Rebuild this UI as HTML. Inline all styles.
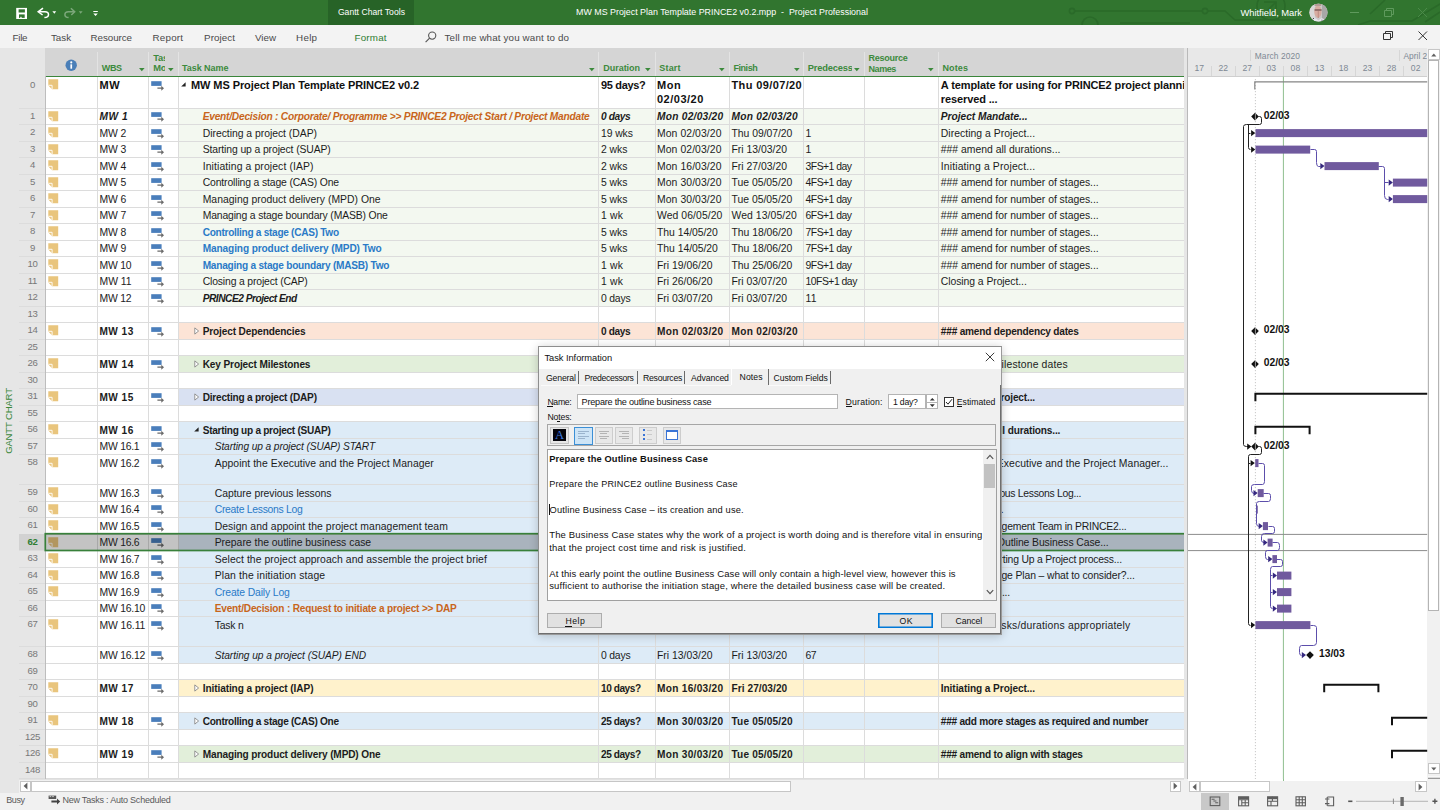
<!DOCTYPE html>
<html lang="en"><head><meta charset="utf-8"><title>MW MS Project Plan Template PRINCE2 v0.2.mpp - Project Professional</title>
<style>
html,body{margin:0;padding:0;}
body{width:1440px;height:810px;overflow:hidden;position:relative;background:#fff;font-family:"Liberation Sans", sans-serif;}
div,span.t,svg{position:absolute;}
span.t{white-space:nowrap;line-height:16px;height:16px;}
</style></head>
<body>
<div style="left:0px;top:0px;width:1440px;height:25.4px;background:#31752f;"></div>
<svg style="left:1040px;top:0" width="400" height="25" viewBox="0 0 400 25">
<g fill="none" stroke="#2a6a29" stroke-width="1.6">
<path d="M32 11 H163 M167 11 H185 L195 20 H260"/>
<circle cx="32" cy="11" r="2.6" fill="#31752f"/><circle cx="165" cy="11" r="2.6" fill="#31752f"/>
<circle cx="231" cy="6" r="14"/><path d="M224 2 H236 V12 M236 2 L226 12"/>
<path d="M42 25 A8 8 0 0 1 58 25 M80 23 H150"/>
<path d="M400 4 L372 21 H330 L318 25 M400 12 L385 22 M345 0 L330 14"/>
</g></svg>
<div style="left:0px;top:25px;width:1440px;height:1px;background:#8fb28e;"></div>
<div style="left:328px;top:0px;width:86px;height:25px;background:#276327;"></div>
<div style="left:328px;top:25px;width:86px;height:1px;background:#88a987;"></div>
<span class="t" style="left:337.9px;top:4px;font-size:8.6px;color:#fff;letter-spacing:0.02px;">Gantt Chart Tools</span>
<span class="t" style="left:576px;top:4px;font-size:8.9px;color:#fff;letter-spacing:0.001px;white-space:pre;">MW MS Project Plan Template PRINCE2 v0.2.mpp  -  Project Professional</span>
<span class="t" style="left:1240.5px;top:4.5px;font-size:9.4px;color:#fff;letter-spacing:-0.033px;">Whitfield, Mark</span>
<svg style="left:1309px;top:3.4px" width="19" height="19" viewBox="0 0 19 19">
<defs><clipPath id="av"><circle cx="9.5" cy="9.5" r="9.1"/></clipPath></defs>
<g clip-path="url(#av)"><rect width="19" height="19" fill="#cbc9c9"/>
<rect x="0" y="0" width="6" height="19" fill="#d9d8d8"/><rect x="13" y="0" width="6" height="19" fill="#a8a7a7"/>
<ellipse cx="8.9" cy="8.6" rx="3.7" ry="6.2" fill="#d7aca1"/><rect x="5.6" y="1" width="6.6" height="2" fill="#b39a96"/>
<rect x="5.6" y="6.4" width="7" height="1.2" fill="#6e4b49"/><path d="M9.3 8 V15" stroke="#c08f86" stroke-width="1.2"/>
<path d="M2 19 Q4 14.6 7 15.4 L9.4 17.6 L11.8 15.4 Q15 14.6 17 19Z" fill="#e6e4ec"/><path d="M3.4 16.6 L4.8 15.2 M12.6 17.2 L13.6 17.4" stroke="#2a2a30" stroke-width="1"/></g></svg>
<svg style="left:0;top:0" width="110" height="25" viewBox="0 0 110 25">
<rect x="16.2" y="7.9" width="10.8" height="11.1" fill="#fff"/>
<rect x="18.6" y="9.3" width="6.3" height="3.2" fill="#31752f"/><rect x="19" y="14.4" width="5.7" height="4.6" fill="#31752f"/>
<rect x="20.3" y="16.8" width="1.3" height="2.2" fill="#fff"/><rect x="18.2" y="17.9" width="6.9" height="1.1" fill="#fff"/>
<g fill="none" stroke="#fff" stroke-width="1.5" stroke-linejoin="miter">
<path d="M43 8.2 L38.2 11.8 L42.6 15"/><path d="M39 11.8 H45 Q48.5 11.8 48.5 14.7 Q48.5 17.4 44.4 17.5"/></g>
<path d="M52.4 11.2 H56.2 L54.3 13.8 Z" fill="#fff"/>
<g opacity="0.36"><g fill="none" stroke="#fff" stroke-width="1.5"><path d="M70.9 8.2 L74.7 11.8 L71.3 15"/><path d="M74 11.8 H68.4 Q64.9 11.8 64.9 14.7 Q64.9 17.4 68.6 17.5"/></g>
<path d="M78.8 11.2 H82.6 L80.7 13.8 Z" fill="#fff"/></g>
<path d="M93.3 10.9 H97.8 V11.9 H93.3 Z M93.3 13.5 H97.8 L95.55 15.9 Z" fill="#fff"/>
</svg>
<svg style="left:1340px;top:0" width="100" height="24" viewBox="0 0 100 24">
<g fill="none" stroke="#5f9a5d" stroke-width="1"><path d="M10 12.5 H19"/>
<path d="M44.5 10.5 H51.5 V16.5 H44.5 Z M46.5 10.5 V8.5 H53.5 V14.5 H51.5"/>
<path d="M78 8 L87 17 M87 8 L78 17" stroke="#4b8a49"/></g></svg>
<div style="left:0px;top:25.4px;width:1440px;height:22.6px;background:#f3f3f3;"></div>
<span class="t" style="left:12.5px;top:29.5px;font-size:9.8px;color:#4a4a4a;letter-spacing:-0.24px;">File</span>
<span class="t" style="left:51px;top:29.5px;font-size:9.8px;color:#4a4a4a;letter-spacing:-0.026px;">Task</span>
<span class="t" style="left:90.5px;top:29.5px;font-size:9.8px;color:#4a4a4a;letter-spacing:-0.051px;">Resource</span>
<span class="t" style="left:152.5px;top:29.5px;font-size:9.8px;color:#4a4a4a;letter-spacing:0.234px;">Report</span>
<span class="t" style="left:204px;top:29.5px;font-size:9.8px;color:#4a4a4a;letter-spacing:0.096px;">Project</span>
<span class="t" style="left:255px;top:29.5px;font-size:9.8px;color:#4a4a4a;letter-spacing:0.005px;">View</span>
<span class="t" style="left:296px;top:29.5px;font-size:9.8px;color:#4a4a4a;letter-spacing:0.307px;">Help</span>
<span class="t" style="left:354.5px;top:29.5px;font-size:9.8px;color:#2f7d32;letter-spacing:0.209px;">Format</span>
<span class="t" style="left:444.5px;top:29.5px;font-size:9.8px;color:#4a4a4a;letter-spacing:0.141px;">Tell me what you want to do</span>
<svg style="left:422.8px;top:29.3px" width="16" height="16" viewBox="0 0 16 16">
<circle cx="9.2" cy="6.6" r="3.6" fill="none" stroke="#555" stroke-width="1.1"/><path d="M6.6 9.2 L2.6 13.2" stroke="#555" stroke-width="1.2"/></svg>
<svg style="left:1380px;top:28px" width="56" height="16" viewBox="0 0 56 16">
<g fill="none" stroke="#333" stroke-width="1"><path d="M3.5 5.5 H10.5 V11.5 H3.5 Z M5.5 5.5 V3.5 H12.5 V9.5 H10.5"/>
<path d="M38.5 3.5 L47 12 M47 3.5 L38.5 12"/></g></svg>
<div style="left:0px;top:48px;width:45px;height:745px;background:#e6e6e6;"></div>
<span class="t" style="left:-30.7px;top:412.8px;width:80px;text-align:center;font-size:9.6px;color:#3a873a;transform:rotate(-90deg);letter-spacing:-0.2px;">GANTT CHART</span>
<div style="left:45px;top:48px;width:1139px;height:28px;background:#d5d5d5;"></div>
<div style="left:96.5px;top:52px;width:1px;height:24px;background:#e3e3e3;"></div>
<div style="left:147.5px;top:52px;width:1px;height:24px;background:#e3e3e3;"></div>
<div style="left:177.5px;top:52px;width:1px;height:24px;background:#e3e3e3;"></div>
<div style="left:597.5px;top:52px;width:1px;height:24px;background:#e3e3e3;"></div>
<div style="left:654.5px;top:52px;width:1px;height:24px;background:#e3e3e3;"></div>
<div style="left:728.5px;top:52px;width:1px;height:24px;background:#e3e3e3;"></div>
<div style="left:802.5px;top:52px;width:1px;height:24px;background:#e3e3e3;"></div>
<div style="left:863.5px;top:52px;width:1px;height:24px;background:#e3e3e3;"></div>
<div style="left:937.5px;top:52px;width:1px;height:24px;background:#e3e3e3;"></div>
<div style="left:45px;top:75.5px;width:1139px;height:1.7px;background:#3a853a;"></div>
<svg style="left:65px;top:59px" width="13" height="13" viewBox="0 0 13 13"><circle cx="6.2" cy="6.2" r="5.7" fill="#4a7fb8"/>
<rect x="5.4" y="5.3" width="1.7" height="4.4" fill="#fff"/><circle cx="6.25" cy="3.4" r="1.05" fill="#fff"/></svg>
<span class="t" style="left:101.7px;top:60px;font-size:9px;color:#3c8a3c;font-weight:bold;letter-spacing:-0.305px;">WBS</span>
<svg style="left:138.9px;top:68.3px" width="6" height="4" viewBox="0 0 6 4"><path d="M0 0 H5.6 L2.8 3.2 Z" fill="#3c8a3c"/></svg>
<div style="left:152px;top:50px;width:13.4px;height:26px;overflow:hidden;"><span class="t" style="left:1.3px;top:-0.1px;font-size:9.3px;font-weight:bold;color:#3c8a3c;letter-spacing:-0.2px;">Task</span><span class="t" style="left:1.3px;top:10.4px;font-size:9.3px;font-weight:bold;color:#3c8a3c;letter-spacing:-0.2px;">Mode</span></div>
<svg style="left:168px;top:68.3px" width="6" height="4" viewBox="0 0 6 4"><path d="M0 0 H5.6 L2.8 3.2 Z" fill="#3c8a3c"/></svg>
<span class="t" style="left:182px;top:60px;font-size:9px;color:#3c8a3c;font-weight:bold;letter-spacing:-0.046px;">Task Name</span>
<svg style="left:588.8px;top:68.3px" width="6" height="4" viewBox="0 0 6 4"><path d="M0 0 H5.6 L2.8 3.2 Z" fill="#3c8a3c"/></svg>
<span class="t" style="left:603.3px;top:60px;font-size:9px;color:#3c8a3c;font-weight:bold;letter-spacing:-0.044px;">Duration</span>
<svg style="left:645px;top:68.3px" width="6" height="4" viewBox="0 0 6 4"><path d="M0 0 H5.6 L2.8 3.2 Z" fill="#3c8a3c"/></svg>
<span class="t" style="left:659.2px;top:60px;font-size:9px;color:#3c8a3c;font-weight:bold;letter-spacing:0.219px;">Start</span>
<svg style="left:719.2px;top:68.3px" width="6" height="4" viewBox="0 0 6 4"><path d="M0 0 H5.6 L2.8 3.2 Z" fill="#3c8a3c"/></svg>
<span class="t" style="left:733.5px;top:60px;font-size:9px;color:#3c8a3c;font-weight:bold;letter-spacing:-0.462px;">Finish</span>
<svg style="left:793.6px;top:68.3px" width="6" height="4" viewBox="0 0 6 4"><path d="M0 0 H5.6 L2.8 3.2 Z" fill="#3c8a3c"/></svg>
<div style="left:806px;top:58px;width:45.6px;height:18px;overflow:hidden;"><span class="t" style="left:1.7px;top:1.7px;font-size:9.3px;font-weight:bold;color:#3c8a3c;letter-spacing:-0.15px;">Predecessors</span></div>
<svg style="left:854.4px;top:68.3px" width="6" height="4" viewBox="0 0 6 4"><path d="M0 0 H5.6 L2.8 3.2 Z" fill="#3c8a3c"/></svg>
<span class="t" style="left:868.4px;top:50px;font-size:9px;color:#3c8a3c;font-weight:bold;letter-spacing:-0.22px;">Resource</span>
<span class="t" style="left:868.4px;top:61px;font-size:9px;color:#3c8a3c;font-weight:bold;letter-spacing:-0.385px;">Names</span>
<svg style="left:928px;top:68.3px" width="6" height="4" viewBox="0 0 6 4"><path d="M0 0 H5.6 L2.8 3.2 Z" fill="#3c8a3c"/></svg>
<span class="t" style="left:942.5px;top:60px;font-size:9px;color:#3c8a3c;font-weight:bold;letter-spacing:0.119px;">Notes</span>
<div style="left:178px;top:108.3px;width:1006px;height:16.5px;background:#f3f8f0;"></div>
<div style="left:178px;top:124.8px;width:1006px;height:16.5px;background:#f3f8f0;"></div>
<div style="left:178px;top:141.3px;width:1006px;height:16.5px;background:#f3f8f0;"></div>
<div style="left:178px;top:157.8px;width:1006px;height:16.5px;background:#f3f8f0;"></div>
<div style="left:178px;top:174.3px;width:1006px;height:16.5px;background:#f3f8f0;"></div>
<div style="left:178px;top:190.8px;width:1006px;height:16.5px;background:#f3f8f0;"></div>
<div style="left:178px;top:207.3px;width:1006px;height:16.5px;background:#f3f8f0;"></div>
<div style="left:178px;top:223.8px;width:1006px;height:16.5px;background:#f3f8f0;"></div>
<div style="left:178px;top:240.3px;width:1006px;height:16.5px;background:#f3f8f0;"></div>
<div style="left:178px;top:256.8px;width:1006px;height:16.5px;background:#f3f8f0;"></div>
<div style="left:178px;top:273.3px;width:1006px;height:16.5px;background:#f3f8f0;"></div>
<div style="left:178px;top:289.8px;width:1006px;height:16.5px;background:#f3f8f0;"></div>
<div style="left:178px;top:322.8px;width:1006px;height:16.5px;background:#fce4d6;"></div>
<div style="left:178px;top:355.8px;width:1006px;height:16.5px;background:#e2efda;"></div>
<div style="left:178px;top:388.8px;width:1006px;height:16.5px;background:#d9e1f2;"></div>
<div style="left:178px;top:421.8px;width:1006px;height:16.5px;background:#ddebf7;"></div>
<div style="left:178px;top:438.3px;width:1006px;height:16.5px;background:#ddebf7;"></div>
<div style="left:178px;top:454.8px;width:1006px;height:30px;background:#ddebf7;"></div>
<div style="left:178px;top:484.8px;width:1006px;height:16.5px;background:#ddebf7;"></div>
<div style="left:178px;top:501.3px;width:1006px;height:16.5px;background:#ddebf7;"></div>
<div style="left:178px;top:517.8px;width:1006px;height:16.5px;background:#ddebf7;"></div>
<div style="left:178px;top:534.3px;width:1006px;height:16.5px;background:#ddebf7;"></div>
<div style="left:178px;top:550.8px;width:1006px;height:16.5px;background:#ddebf7;"></div>
<div style="left:178px;top:567.3px;width:1006px;height:16.5px;background:#ddebf7;"></div>
<div style="left:178px;top:583.8px;width:1006px;height:16.5px;background:#ddebf7;"></div>
<div style="left:178px;top:600.3px;width:1006px;height:16.5px;background:#ddebf7;"></div>
<div style="left:178px;top:616.8px;width:1006px;height:30px;background:#ddebf7;"></div>
<div style="left:178px;top:646.8px;width:1006px;height:16.5px;background:#ddebf7;"></div>
<div style="left:178px;top:679.8px;width:1006px;height:16.5px;background:#fff2cc;"></div>
<div style="left:178px;top:712.8px;width:1006px;height:16.5px;background:#ddebf7;"></div>
<div style="left:178px;top:745.8px;width:1006px;height:16.5px;background:#e2efda;"></div>
<div style="left:19px;top:107.6px;width:1165px;height:1px;background:#dcdcdc;"></div>
<div style="left:19px;top:124.1px;width:1165px;height:1px;background:#dcdcdc;"></div>
<div style="left:19px;top:140.6px;width:1165px;height:1px;background:#dcdcdc;"></div>
<div style="left:19px;top:157.1px;width:1165px;height:1px;background:#dcdcdc;"></div>
<div style="left:19px;top:173.6px;width:1165px;height:1px;background:#dcdcdc;"></div>
<div style="left:19px;top:190.1px;width:1165px;height:1px;background:#dcdcdc;"></div>
<div style="left:19px;top:206.6px;width:1165px;height:1px;background:#dcdcdc;"></div>
<div style="left:19px;top:223.1px;width:1165px;height:1px;background:#dcdcdc;"></div>
<div style="left:19px;top:239.6px;width:1165px;height:1px;background:#dcdcdc;"></div>
<div style="left:19px;top:256.1px;width:1165px;height:1px;background:#dcdcdc;"></div>
<div style="left:19px;top:272.6px;width:1165px;height:1px;background:#dcdcdc;"></div>
<div style="left:19px;top:289.1px;width:1165px;height:1px;background:#dcdcdc;"></div>
<div style="left:19px;top:305.6px;width:1165px;height:1px;background:#dcdcdc;"></div>
<div style="left:19px;top:322.1px;width:1165px;height:1px;background:#dcdcdc;"></div>
<div style="left:19px;top:338.6px;width:1165px;height:1px;background:#dcdcdc;"></div>
<div style="left:19px;top:355.1px;width:1165px;height:1px;background:#dcdcdc;"></div>
<div style="left:19px;top:371.6px;width:1165px;height:1px;background:#dcdcdc;"></div>
<div style="left:19px;top:388.1px;width:1165px;height:1px;background:#dcdcdc;"></div>
<div style="left:19px;top:404.6px;width:1165px;height:1px;background:#dcdcdc;"></div>
<div style="left:19px;top:421.1px;width:1165px;height:1px;background:#dcdcdc;"></div>
<div style="left:19px;top:437.6px;width:1165px;height:1px;background:#dcdcdc;"></div>
<div style="left:19px;top:454.1px;width:1165px;height:1px;background:#dcdcdc;"></div>
<div style="left:19px;top:484.1px;width:1165px;height:1px;background:#dcdcdc;"></div>
<div style="left:19px;top:500.6px;width:1165px;height:1px;background:#dcdcdc;"></div>
<div style="left:19px;top:517.1px;width:1165px;height:1px;background:#dcdcdc;"></div>
<div style="left:19px;top:533.6px;width:1165px;height:1px;background:#dcdcdc;"></div>
<div style="left:19px;top:550.1px;width:1165px;height:1px;background:#dcdcdc;"></div>
<div style="left:19px;top:566.6px;width:1165px;height:1px;background:#dcdcdc;"></div>
<div style="left:19px;top:583.1px;width:1165px;height:1px;background:#dcdcdc;"></div>
<div style="left:19px;top:599.6px;width:1165px;height:1px;background:#dcdcdc;"></div>
<div style="left:19px;top:616.1px;width:1165px;height:1px;background:#dcdcdc;"></div>
<div style="left:19px;top:646.1px;width:1165px;height:1px;background:#dcdcdc;"></div>
<div style="left:19px;top:662.6px;width:1165px;height:1px;background:#dcdcdc;"></div>
<div style="left:19px;top:679.1px;width:1165px;height:1px;background:#dcdcdc;"></div>
<div style="left:19px;top:695.6px;width:1165px;height:1px;background:#dcdcdc;"></div>
<div style="left:19px;top:712.1px;width:1165px;height:1px;background:#dcdcdc;"></div>
<div style="left:19px;top:728.6px;width:1165px;height:1px;background:#dcdcdc;"></div>
<div style="left:19px;top:745.1px;width:1165px;height:1px;background:#dcdcdc;"></div>
<div style="left:19px;top:761.6px;width:1165px;height:1px;background:#dcdcdc;"></div>
<div style="left:19px;top:778.1px;width:1165px;height:1px;background:#dcdcdc;"></div>
<div style="left:96.5px;top:77px;width:1px;height:702px;background:#dcdcdc;"></div>
<div style="left:147.5px;top:77px;width:1px;height:702px;background:#dcdcdc;"></div>
<div style="left:177.5px;top:77px;width:1px;height:702px;background:#dcdcdc;"></div>
<div style="left:597.5px;top:77px;width:1px;height:702px;background:#dcdcdc;"></div>
<div style="left:654.5px;top:77px;width:1px;height:702px;background:#dcdcdc;"></div>
<div style="left:728.5px;top:77px;width:1px;height:702px;background:#dcdcdc;"></div>
<div style="left:802.5px;top:77px;width:1px;height:702px;background:#dcdcdc;"></div>
<div style="left:863.5px;top:77px;width:1px;height:702px;background:#dcdcdc;"></div>
<div style="left:937.5px;top:77px;width:1px;height:702px;background:#dcdcdc;"></div>
<div style="left:44.5px;top:76px;width:1px;height:703px;background:#bdbdbd;"></div>
<div style="left:19px;top:533.9px;width:26px;height:16.5px;background:#d2d2d2;"></div>
<span class="t" style="left:-7.6px;width:80px;text-align:center;top:76.5px;font-size:9.6px;color:#787878;letter-spacing:-0.35px;">0</span>
<span class="t" style="left:-7.6px;width:80px;text-align:center;top:107.5px;font-size:9.6px;color:#787878;letter-spacing:-0.35px;">1</span>
<span class="t" style="left:-7.6px;width:80px;text-align:center;top:123.5px;font-size:9.6px;color:#787878;letter-spacing:-0.35px;">2</span>
<span class="t" style="left:-7.6px;width:80px;text-align:center;top:140.5px;font-size:9.6px;color:#787878;letter-spacing:-0.35px;">3</span>
<span class="t" style="left:-7.6px;width:80px;text-align:center;top:156.5px;font-size:9.6px;color:#787878;letter-spacing:-0.35px;">4</span>
<span class="t" style="left:-7.6px;width:80px;text-align:center;top:173.5px;font-size:9.6px;color:#787878;letter-spacing:-0.35px;">5</span>
<span class="t" style="left:-7.6px;width:80px;text-align:center;top:189.5px;font-size:9.6px;color:#787878;letter-spacing:-0.35px;">6</span>
<span class="t" style="left:-7.6px;width:80px;text-align:center;top:206.5px;font-size:9.6px;color:#787878;letter-spacing:-0.35px;">7</span>
<span class="t" style="left:-7.6px;width:80px;text-align:center;top:222.5px;font-size:9.6px;color:#787878;letter-spacing:-0.35px;">8</span>
<span class="t" style="left:-7.6px;width:80px;text-align:center;top:239.5px;font-size:9.6px;color:#787878;letter-spacing:-0.35px;">9</span>
<span class="t" style="left:-7.6px;width:80px;text-align:center;top:255.5px;font-size:9.6px;color:#787878;letter-spacing:-0.35px;">10</span>
<span class="t" style="left:-7.6px;width:80px;text-align:center;top:272.5px;font-size:9.6px;color:#787878;letter-spacing:-0.35px;">11</span>
<span class="t" style="left:-7.6px;width:80px;text-align:center;top:288.5px;font-size:9.6px;color:#787878;letter-spacing:-0.35px;">12</span>
<span class="t" style="left:-7.6px;width:80px;text-align:center;top:305.5px;font-size:9.6px;color:#787878;letter-spacing:-0.35px;">13</span>
<span class="t" style="left:-7.6px;width:80px;text-align:center;top:321.5px;font-size:9.6px;color:#787878;letter-spacing:-0.35px;">14</span>
<span class="t" style="left:-7.6px;width:80px;text-align:center;top:338.5px;font-size:9.6px;color:#787878;letter-spacing:-0.35px;">25</span>
<span class="t" style="left:-7.6px;width:80px;text-align:center;top:354.5px;font-size:9.6px;color:#787878;letter-spacing:-0.35px;">26</span>
<span class="t" style="left:-7.6px;width:80px;text-align:center;top:371.5px;font-size:9.6px;color:#787878;letter-spacing:-0.35px;">30</span>
<span class="t" style="left:-7.6px;width:80px;text-align:center;top:387.5px;font-size:9.6px;color:#787878;letter-spacing:-0.35px;">31</span>
<span class="t" style="left:-7.6px;width:80px;text-align:center;top:404.5px;font-size:9.6px;color:#787878;letter-spacing:-0.35px;">55</span>
<span class="t" style="left:-7.6px;width:80px;text-align:center;top:420.5px;font-size:9.6px;color:#787878;letter-spacing:-0.35px;">56</span>
<span class="t" style="left:-7.6px;width:80px;text-align:center;top:437.5px;font-size:9.6px;color:#787878;letter-spacing:-0.35px;">57</span>
<span class="t" style="left:-7.6px;width:80px;text-align:center;top:453.5px;font-size:9.6px;color:#787878;letter-spacing:-0.35px;">58</span>
<span class="t" style="left:-7.6px;width:80px;text-align:center;top:483.5px;font-size:9.6px;color:#787878;letter-spacing:-0.35px;">59</span>
<span class="t" style="left:-7.6px;width:80px;text-align:center;top:500.5px;font-size:9.6px;color:#787878;letter-spacing:-0.35px;">60</span>
<span class="t" style="left:-7.6px;width:80px;text-align:center;top:516.5px;font-size:9.6px;color:#787878;letter-spacing:-0.35px;">61</span>
<span class="t" style="left:-7.6px;width:80px;text-align:center;top:533.5px;font-size:9.6px;color:#2f7d32;font-weight:bold;letter-spacing:-0.35px;">62</span>
<span class="t" style="left:-7.6px;width:80px;text-align:center;top:549.5px;font-size:9.6px;color:#787878;letter-spacing:-0.35px;">63</span>
<span class="t" style="left:-7.6px;width:80px;text-align:center;top:566.5px;font-size:9.6px;color:#787878;letter-spacing:-0.35px;">64</span>
<span class="t" style="left:-7.6px;width:80px;text-align:center;top:582.5px;font-size:9.6px;color:#787878;letter-spacing:-0.35px;">65</span>
<span class="t" style="left:-7.6px;width:80px;text-align:center;top:599.5px;font-size:9.6px;color:#787878;letter-spacing:-0.35px;">66</span>
<span class="t" style="left:-7.6px;width:80px;text-align:center;top:615.5px;font-size:9.6px;color:#787878;letter-spacing:-0.35px;">67</span>
<span class="t" style="left:-7.6px;width:80px;text-align:center;top:645.5px;font-size:9.6px;color:#787878;letter-spacing:-0.35px;">68</span>
<span class="t" style="left:-7.6px;width:80px;text-align:center;top:662.5px;font-size:9.6px;color:#787878;letter-spacing:-0.35px;">69</span>
<span class="t" style="left:-7.6px;width:80px;text-align:center;top:678.5px;font-size:9.6px;color:#787878;letter-spacing:-0.35px;">70</span>
<span class="t" style="left:-7.6px;width:80px;text-align:center;top:695.5px;font-size:9.6px;color:#787878;letter-spacing:-0.35px;">90</span>
<span class="t" style="left:-7.6px;width:80px;text-align:center;top:711.5px;font-size:9.6px;color:#787878;letter-spacing:-0.35px;">91</span>
<span class="t" style="left:-7.6px;width:80px;text-align:center;top:728.5px;font-size:9.6px;color:#787878;letter-spacing:-0.35px;">125</span>
<span class="t" style="left:-7.6px;width:80px;text-align:center;top:744.5px;font-size:9.6px;color:#787878;letter-spacing:-0.35px;">126</span>
<span class="t" style="left:-7.6px;width:80px;text-align:center;top:761.5px;font-size:9.6px;color:#787878;letter-spacing:-0.35px;">148</span>
<svg style="left:48px;top:79.3px" width="11" height="11" viewBox="0 0 11 11"><path d="M0.3 0.2 H10.2 V10.2 H4 L0.3 6.6 Z" fill="#e9c57d"/><path d="M0.3 6.3 H4.1 V10.2" fill="none" stroke="#fff" stroke-width="0.9"/></svg>
<svg style="left:151.4px;top:81px" width="14" height="11" viewBox="0 0 14 11"><rect x="0.2" y="0.2" width="10.4" height="4.7" fill="#4a7ebb"/><path d="M6.4 6.6 H10.3 V4.7 L13 7.2 L10.3 9.7 V7.8 H6.4 Z" fill="#6a6a6a"/></svg>
<span class="t" style="left:99.5px;top:77px;font-size:11px;color:#111;font-weight:bold;letter-spacing:0.5px;">MW</span>
<svg style="left:181.4px;top:82.2px" width="6" height="6" viewBox="0 0 6 6"><path d="M4.6 0.2 V4.6 H0.2 Z" fill="#222"/></svg>
<span class="t" style="left:191px;top:77px;font-size:11px;color:#111;font-weight:bold;letter-spacing:-0.084px;">MW MS Project Plan Template PRINCE2 v0.2</span>
<span class="t" style="left:601px;top:77px;font-size:11px;color:#111;font-weight:bold;letter-spacing:-0.341px;">95 days?</span>
<span class="t" style="left:657px;top:77px;font-size:11px;color:#111;font-weight:bold;letter-spacing:0.5px;">Mon</span>
<span class="t" style="left:657px;top:91px;font-size:11px;color:#111;font-weight:bold;letter-spacing:0.5px;">02/03/20</span>
<span class="t" style="left:731.5px;top:77px;font-size:11px;color:#111;font-weight:bold;letter-spacing:0.378px;">Thu 09/07/20</span>
<div style="left:938.5px;top:77px;width:245px;height:31px;overflow:hidden;">
<span class="t" style="left:2.3px;top:0px;font-size:11px;color:#111;font-weight:bold;letter-spacing:-0.112px;">A template for using for PRINCE2 project planning and control. All rights</span>
<span class="t" style="left:2.3px;top:14px;font-size:11px;color:#111;font-weight:bold;letter-spacing:-0.117px;">reserved ...</span>
</div>
<svg style="left:48px;top:110.6px" width="11" height="11" viewBox="0 0 11 11"><path d="M0.3 0.2 H10.2 V10.2 H4 L0.3 6.6 Z" fill="#e9c57d"/><path d="M0.3 6.3 H4.1 V10.2" fill="none" stroke="#fff" stroke-width="0.9"/></svg>
<svg style="left:151.4px;top:112.3px" width="14" height="11" viewBox="0 0 14 11"><rect x="0.2" y="0.2" width="10.4" height="4.7" fill="#4a7ebb"/><path d="M6.4 6.6 H10.3 V4.7 L13 7.2 L10.3 9.7 V7.8 H6.4 Z" fill="#6a6a6a"/></svg>
<span class="t" style="left:99.5px;top:108.5px;font-size:10.2px;color:#1c1c1c;font-weight:bold;font-style:italic;letter-spacing:0.5px;">MW 1</span>
<span class="t" style="left:202.7px;top:108.5px;font-size:10.2px;color:#c8651b;font-weight:bold;font-style:italic;letter-spacing:-0.231px;">Event/Decision : Corporate/ Programme &gt;&gt; PRINCE2 Project Start / Project Mandate</span>
<span class="t" style="left:601px;top:108.5px;font-size:10.2px;color:#1c1c1c;font-weight:bold;font-style:italic;letter-spacing:-0.419px;">0 days</span>
<span class="t" style="left:657px;top:108.5px;font-size:10.2px;color:#1c1c1c;font-weight:bold;font-style:italic;letter-spacing:0.245px;">Mon 02/03/20</span>
<span class="t" style="left:731.5px;top:108.5px;font-size:10.2px;color:#1c1c1c;font-weight:bold;font-style:italic;letter-spacing:0.245px;">Mon 02/03/20</span>
<span class="t" style="left:940.8px;top:108.5px;font-size:10.2px;color:#1c1c1c;font-weight:bold;font-style:italic;letter-spacing:-0.027px;">Project Mandate...</span>
<svg style="left:48px;top:127.1px" width="11" height="11" viewBox="0 0 11 11"><path d="M0.3 0.2 H10.2 V10.2 H4 L0.3 6.6 Z" fill="#e9c57d"/><path d="M0.3 6.3 H4.1 V10.2" fill="none" stroke="#fff" stroke-width="0.9"/></svg>
<svg style="left:151.4px;top:128.8px" width="14" height="11" viewBox="0 0 14 11"><rect x="0.2" y="0.2" width="10.4" height="4.7" fill="#4a7ebb"/><path d="M6.4 6.6 H10.3 V4.7 L13 7.2 L10.3 9.7 V7.8 H6.4 Z" fill="#6a6a6a"/></svg>
<span class="t" style="left:99.5px;top:125.5px;font-size:10.4px;color:#1c1c1c;letter-spacing:-0.099px;">MW 2</span>
<span class="t" style="left:202.7px;top:125.5px;font-size:10.4px;color:#1c1c1c;letter-spacing:-0.024px;">Directing a project (DAP)</span>
<span class="t" style="left:601px;top:125.5px;font-size:10.4px;color:#1c1c1c;letter-spacing:-0.1px;">19 wks</span>
<span class="t" style="left:657px;top:125.5px;font-size:10.4px;color:#1c1c1c;letter-spacing:0.082px;">Mon 02/03/20</span>
<span class="t" style="left:731.5px;top:125.5px;font-size:10.4px;color:#1c1c1c;letter-spacing:-0.037px;">Thu 09/07/20</span>
<span class="t" style="left:805.5px;top:125.5px;font-size:10.4px;color:#1c1c1c;">1</span>
<span class="t" style="left:940.8px;top:125.5px;font-size:10.4px;color:#1c1c1c;letter-spacing:0.037px;">Directing a Project...</span>
<svg style="left:48px;top:143.6px" width="11" height="11" viewBox="0 0 11 11"><path d="M0.3 0.2 H10.2 V10.2 H4 L0.3 6.6 Z" fill="#e9c57d"/><path d="M0.3 6.3 H4.1 V10.2" fill="none" stroke="#fff" stroke-width="0.9"/></svg>
<svg style="left:151.4px;top:145.3px" width="14" height="11" viewBox="0 0 14 11"><rect x="0.2" y="0.2" width="10.4" height="4.7" fill="#4a7ebb"/><path d="M6.4 6.6 H10.3 V4.7 L13 7.2 L10.3 9.7 V7.8 H6.4 Z" fill="#6a6a6a"/></svg>
<span class="t" style="left:99.5px;top:141.5px;font-size:10.4px;color:#1c1c1c;letter-spacing:-0.099px;">MW 3</span>
<span class="t" style="left:202.7px;top:141.5px;font-size:10.4px;color:#1c1c1c;letter-spacing:-0.11px;">Starting up a project (SUAP)</span>
<span class="t" style="left:601px;top:141.5px;font-size:10.4px;color:#1c1c1c;letter-spacing:-0.03px;">2 wks</span>
<span class="t" style="left:657px;top:141.5px;font-size:10.4px;color:#1c1c1c;letter-spacing:0.082px;">Mon 02/03/20</span>
<span class="t" style="left:731.5px;top:141.5px;font-size:10.4px;color:#1c1c1c;letter-spacing:-0.001px;">Fri 13/03/20</span>
<span class="t" style="left:805.5px;top:141.5px;font-size:10.4px;color:#1c1c1c;">1</span>
<span class="t" style="left:940.8px;top:141.5px;font-size:10.4px;color:#1c1c1c;letter-spacing:0.003px;">### amend all durations...</span>
<svg style="left:48px;top:160.1px" width="11" height="11" viewBox="0 0 11 11"><path d="M0.3 0.2 H10.2 V10.2 H4 L0.3 6.6 Z" fill="#e9c57d"/><path d="M0.3 6.3 H4.1 V10.2" fill="none" stroke="#fff" stroke-width="0.9"/></svg>
<svg style="left:151.4px;top:161.8px" width="14" height="11" viewBox="0 0 14 11"><rect x="0.2" y="0.2" width="10.4" height="4.7" fill="#4a7ebb"/><path d="M6.4 6.6 H10.3 V4.7 L13 7.2 L10.3 9.7 V7.8 H6.4 Z" fill="#6a6a6a"/></svg>
<span class="t" style="left:99.5px;top:158.5px;font-size:10.4px;color:#1c1c1c;letter-spacing:-0.099px;">MW 4</span>
<span class="t" style="left:202.7px;top:158.5px;font-size:10.4px;color:#1c1c1c;letter-spacing:0.114px;">Initiating a project (IAP)</span>
<span class="t" style="left:601px;top:158.5px;font-size:10.4px;color:#1c1c1c;letter-spacing:-0.03px;">2 wks</span>
<span class="t" style="left:657px;top:158.5px;font-size:10.4px;color:#1c1c1c;letter-spacing:0.082px;">Mon 16/03/20</span>
<span class="t" style="left:731.5px;top:158.5px;font-size:10.4px;color:#1c1c1c;letter-spacing:-0.001px;">Fri 27/03/20</span>
<span class="t" style="left:805.5px;top:158.5px;font-size:10.4px;color:#1c1c1c;letter-spacing:-0.5px;">3FS+1 day</span>
<span class="t" style="left:940.8px;top:158.5px;font-size:10.4px;color:#1c1c1c;letter-spacing:0.14px;">Initiating a Project...</span>
<svg style="left:48px;top:176.6px" width="11" height="11" viewBox="0 0 11 11"><path d="M0.3 0.2 H10.2 V10.2 H4 L0.3 6.6 Z" fill="#e9c57d"/><path d="M0.3 6.3 H4.1 V10.2" fill="none" stroke="#fff" stroke-width="0.9"/></svg>
<svg style="left:151.4px;top:178.3px" width="14" height="11" viewBox="0 0 14 11"><rect x="0.2" y="0.2" width="10.4" height="4.7" fill="#4a7ebb"/><path d="M6.4 6.6 H10.3 V4.7 L13 7.2 L10.3 9.7 V7.8 H6.4 Z" fill="#6a6a6a"/></svg>
<span class="t" style="left:99.5px;top:174.5px;font-size:10.4px;color:#1c1c1c;letter-spacing:-0.099px;">MW 5</span>
<span class="t" style="left:202.7px;top:174.5px;font-size:10.4px;color:#1c1c1c;letter-spacing:-0.139px;">Controlling a stage (CAS) One</span>
<span class="t" style="left:601px;top:174.5px;font-size:10.4px;color:#1c1c1c;letter-spacing:-0.03px;">5 wks</span>
<span class="t" style="left:657px;top:174.5px;font-size:10.4px;color:#1c1c1c;letter-spacing:0.082px;">Mon 30/03/20</span>
<span class="t" style="left:731.5px;top:174.5px;font-size:10.4px;color:#1c1c1c;letter-spacing:-0.001px;">Tue 05/05/20</span>
<span class="t" style="left:805.5px;top:174.5px;font-size:10.4px;color:#1c1c1c;letter-spacing:-0.5px;">4FS+1 day</span>
<span class="t" style="left:940.8px;top:174.5px;font-size:10.4px;color:#1c1c1c;letter-spacing:-0.031px;">### amend for number of stages...</span>
<svg style="left:48px;top:193.1px" width="11" height="11" viewBox="0 0 11 11"><path d="M0.3 0.2 H10.2 V10.2 H4 L0.3 6.6 Z" fill="#e9c57d"/><path d="M0.3 6.3 H4.1 V10.2" fill="none" stroke="#fff" stroke-width="0.9"/></svg>
<svg style="left:151.4px;top:194.8px" width="14" height="11" viewBox="0 0 14 11"><rect x="0.2" y="0.2" width="10.4" height="4.7" fill="#4a7ebb"/><path d="M6.4 6.6 H10.3 V4.7 L13 7.2 L10.3 9.7 V7.8 H6.4 Z" fill="#6a6a6a"/></svg>
<span class="t" style="left:99.5px;top:191.5px;font-size:10.4px;color:#1c1c1c;letter-spacing:-0.099px;">MW 6</span>
<span class="t" style="left:202.7px;top:191.5px;font-size:10.4px;color:#1c1c1c;letter-spacing:0.019px;">Managing product delivery (MPD) One</span>
<span class="t" style="left:601px;top:191.5px;font-size:10.4px;color:#1c1c1c;letter-spacing:-0.03px;">5 wks</span>
<span class="t" style="left:657px;top:191.5px;font-size:10.4px;color:#1c1c1c;letter-spacing:0.082px;">Mon 30/03/20</span>
<span class="t" style="left:731.5px;top:191.5px;font-size:10.4px;color:#1c1c1c;letter-spacing:-0.001px;">Tue 05/05/20</span>
<span class="t" style="left:805.5px;top:191.5px;font-size:10.4px;color:#1c1c1c;letter-spacing:-0.5px;">4FS+1 day</span>
<span class="t" style="left:940.8px;top:191.5px;font-size:10.4px;color:#1c1c1c;letter-spacing:-0.031px;">### amend for number of stages...</span>
<svg style="left:48px;top:209.6px" width="11" height="11" viewBox="0 0 11 11"><path d="M0.3 0.2 H10.2 V10.2 H4 L0.3 6.6 Z" fill="#e9c57d"/><path d="M0.3 6.3 H4.1 V10.2" fill="none" stroke="#fff" stroke-width="0.9"/></svg>
<svg style="left:151.4px;top:211.3px" width="14" height="11" viewBox="0 0 14 11"><rect x="0.2" y="0.2" width="10.4" height="4.7" fill="#4a7ebb"/><path d="M6.4 6.6 H10.3 V4.7 L13 7.2 L10.3 9.7 V7.8 H6.4 Z" fill="#6a6a6a"/></svg>
<span class="t" style="left:99.5px;top:207.5px;font-size:10.4px;color:#1c1c1c;letter-spacing:-0.099px;">MW 7</span>
<span class="t" style="left:202.7px;top:207.5px;font-size:10.4px;color:#1c1c1c;letter-spacing:-0.156px;">Managing a stage boundary (MASB) One</span>
<span class="t" style="left:601px;top:207.5px;font-size:10.4px;color:#1c1c1c;letter-spacing:0.156px;">1 wk</span>
<span class="t" style="left:657px;top:207.5px;font-size:10.4px;color:#1c1c1c;letter-spacing:0.075px;">Wed 06/05/20</span>
<span class="t" style="left:731.5px;top:207.5px;font-size:10.4px;color:#1c1c1c;letter-spacing:0.075px;">Wed 13/05/20</span>
<span class="t" style="left:805.5px;top:207.5px;font-size:10.4px;color:#1c1c1c;letter-spacing:-0.5px;">6FS+1 day</span>
<span class="t" style="left:940.8px;top:207.5px;font-size:10.4px;color:#1c1c1c;letter-spacing:-0.031px;">### amend for number of stages...</span>
<svg style="left:48px;top:226.1px" width="11" height="11" viewBox="0 0 11 11"><path d="M0.3 0.2 H10.2 V10.2 H4 L0.3 6.6 Z" fill="#e9c57d"/><path d="M0.3 6.3 H4.1 V10.2" fill="none" stroke="#fff" stroke-width="0.9"/></svg>
<svg style="left:151.4px;top:227.8px" width="14" height="11" viewBox="0 0 14 11"><rect x="0.2" y="0.2" width="10.4" height="4.7" fill="#4a7ebb"/><path d="M6.4 6.6 H10.3 V4.7 L13 7.2 L10.3 9.7 V7.8 H6.4 Z" fill="#6a6a6a"/></svg>
<span class="t" style="left:99.5px;top:224.5px;font-size:10.4px;color:#1c1c1c;letter-spacing:-0.099px;">MW 8</span>
<span class="t" style="left:202.7px;top:224.5px;font-size:10.1px;color:#2a7ac7;font-weight:bold;letter-spacing:-0.289px;">Controlling a stage (CAS) Two</span>
<span class="t" style="left:601px;top:224.5px;font-size:10.4px;color:#1c1c1c;letter-spacing:-0.03px;">5 wks</span>
<span class="t" style="left:657px;top:224.5px;font-size:10.4px;color:#1c1c1c;letter-spacing:-0.037px;">Thu 14/05/20</span>
<span class="t" style="left:731.5px;top:224.5px;font-size:10.4px;color:#1c1c1c;letter-spacing:-0.037px;">Thu 18/06/20</span>
<span class="t" style="left:805.5px;top:224.5px;font-size:10.4px;color:#1c1c1c;letter-spacing:-0.5px;">7FS+1 day</span>
<span class="t" style="left:940.8px;top:224.5px;font-size:10.4px;color:#1c1c1c;letter-spacing:-0.031px;">### amend for number of stages...</span>
<svg style="left:48px;top:242.6px" width="11" height="11" viewBox="0 0 11 11"><path d="M0.3 0.2 H10.2 V10.2 H4 L0.3 6.6 Z" fill="#e9c57d"/><path d="M0.3 6.3 H4.1 V10.2" fill="none" stroke="#fff" stroke-width="0.9"/></svg>
<svg style="left:151.4px;top:244.3px" width="14" height="11" viewBox="0 0 14 11"><rect x="0.2" y="0.2" width="10.4" height="4.7" fill="#4a7ebb"/><path d="M6.4 6.6 H10.3 V4.7 L13 7.2 L10.3 9.7 V7.8 H6.4 Z" fill="#6a6a6a"/></svg>
<span class="t" style="left:99.5px;top:240.5px;font-size:10.4px;color:#1c1c1c;letter-spacing:-0.099px;">MW 9</span>
<span class="t" style="left:202.7px;top:240.5px;font-size:10.1px;color:#2a7ac7;font-weight:bold;letter-spacing:-0.104px;">Managing product delivery (MPD) Two</span>
<span class="t" style="left:601px;top:240.5px;font-size:10.4px;color:#1c1c1c;letter-spacing:-0.03px;">5 wks</span>
<span class="t" style="left:657px;top:240.5px;font-size:10.4px;color:#1c1c1c;letter-spacing:-0.037px;">Thu 14/05/20</span>
<span class="t" style="left:731.5px;top:240.5px;font-size:10.4px;color:#1c1c1c;letter-spacing:-0.037px;">Thu 18/06/20</span>
<span class="t" style="left:805.5px;top:240.5px;font-size:10.4px;color:#1c1c1c;letter-spacing:-0.5px;">7FS+1 day</span>
<span class="t" style="left:940.8px;top:240.5px;font-size:10.4px;color:#1c1c1c;letter-spacing:-0.031px;">### amend for number of stages...</span>
<svg style="left:48px;top:259.1px" width="11" height="11" viewBox="0 0 11 11"><path d="M0.3 0.2 H10.2 V10.2 H4 L0.3 6.6 Z" fill="#e9c57d"/><path d="M0.3 6.3 H4.1 V10.2" fill="none" stroke="#fff" stroke-width="0.9"/></svg>
<svg style="left:151.4px;top:260.8px" width="14" height="11" viewBox="0 0 14 11"><rect x="0.2" y="0.2" width="10.4" height="4.7" fill="#4a7ebb"/><path d="M6.4 6.6 H10.3 V4.7 L13 7.2 L10.3 9.7 V7.8 H6.4 Z" fill="#6a6a6a"/></svg>
<span class="t" style="left:99.5px;top:257.5px;font-size:10.4px;color:#1c1c1c;letter-spacing:-0.194px;">MW 10</span>
<span class="t" style="left:202.7px;top:257.5px;font-size:10.1px;color:#2a7ac7;font-weight:bold;letter-spacing:-0.233px;">Managing a stage boundary (MASB) Two</span>
<span class="t" style="left:601px;top:257.5px;font-size:10.4px;color:#1c1c1c;letter-spacing:0.156px;">1 wk</span>
<span class="t" style="left:657px;top:257.5px;font-size:10.4px;color:#1c1c1c;letter-spacing:-0.001px;">Fri 19/06/20</span>
<span class="t" style="left:731.5px;top:257.5px;font-size:10.4px;color:#1c1c1c;letter-spacing:-0.037px;">Thu 25/06/20</span>
<span class="t" style="left:805.5px;top:257.5px;font-size:10.4px;color:#1c1c1c;letter-spacing:-0.5px;">9FS+1 day</span>
<span class="t" style="left:940.8px;top:257.5px;font-size:10.4px;color:#1c1c1c;letter-spacing:-0.031px;">### amend for number of stages...</span>
<svg style="left:48px;top:275.6px" width="11" height="11" viewBox="0 0 11 11"><path d="M0.3 0.2 H10.2 V10.2 H4 L0.3 6.6 Z" fill="#e9c57d"/><path d="M0.3 6.3 H4.1 V10.2" fill="none" stroke="#fff" stroke-width="0.9"/></svg>
<svg style="left:151.4px;top:277.3px" width="14" height="11" viewBox="0 0 14 11"><rect x="0.2" y="0.2" width="10.4" height="4.7" fill="#4a7ebb"/><path d="M6.4 6.6 H10.3 V4.7 L13 7.2 L10.3 9.7 V7.8 H6.4 Z" fill="#6a6a6a"/></svg>
<span class="t" style="left:99.5px;top:273.5px;font-size:10.4px;color:#1c1c1c;letter-spacing:0.001px;">MW 11</span>
<span class="t" style="left:202.7px;top:273.5px;font-size:10.4px;color:#1c1c1c;letter-spacing:-0.156px;">Closing a project (CAP)</span>
<span class="t" style="left:601px;top:273.5px;font-size:10.4px;color:#1c1c1c;letter-spacing:0.156px;">1 wk</span>
<span class="t" style="left:657px;top:273.5px;font-size:10.4px;color:#1c1c1c;letter-spacing:-0.001px;">Fri 26/06/20</span>
<span class="t" style="left:731.5px;top:273.5px;font-size:10.4px;color:#1c1c1c;letter-spacing:-0.001px;">Fri 03/07/20</span>
<span class="t" style="left:805.5px;top:273.5px;font-size:10.4px;color:#1c1c1c;letter-spacing:-0.5px;">10FS+1 day</span>
<span class="t" style="left:940.8px;top:273.5px;font-size:10.4px;color:#1c1c1c;letter-spacing:-0.062px;">Closing a Project...</span>
<svg style="left:151.4px;top:293.8px" width="14" height="11" viewBox="0 0 14 11"><rect x="0.2" y="0.2" width="10.4" height="4.7" fill="#4a7ebb"/><path d="M6.4 6.6 H10.3 V4.7 L13 7.2 L10.3 9.7 V7.8 H6.4 Z" fill="#6a6a6a"/></svg>
<span class="t" style="left:99.5px;top:290.5px;font-size:10.4px;color:#1c1c1c;letter-spacing:-0.194px;">MW 12</span>
<span class="t" style="left:202.7px;top:290.5px;font-size:10.2px;color:#1c1c1c;font-weight:bold;font-style:italic;letter-spacing:-0.5px;">PRINCE2 Project End</span>
<span class="t" style="left:601px;top:290.5px;font-size:10.4px;color:#1c1c1c;letter-spacing:-0.196px;">0 days</span>
<span class="t" style="left:657px;top:290.5px;font-size:10.4px;color:#1c1c1c;letter-spacing:-0.001px;">Fri 03/07/20</span>
<span class="t" style="left:731.5px;top:290.5px;font-size:10.4px;color:#1c1c1c;letter-spacing:-0.001px;">Fri 03/07/20</span>
<span class="t" style="left:805.5px;top:290.5px;font-size:10.4px;color:#1c1c1c;letter-spacing:0.347px;">11</span>
<svg style="left:48px;top:325.1px" width="11" height="11" viewBox="0 0 11 11"><path d="M0.3 0.2 H10.2 V10.2 H4 L0.3 6.6 Z" fill="#e9c57d"/><path d="M0.3 6.3 H4.1 V10.2" fill="none" stroke="#fff" stroke-width="0.9"/></svg>
<svg style="left:151.4px;top:326.8px" width="14" height="11" viewBox="0 0 14 11"><rect x="0.2" y="0.2" width="10.4" height="4.7" fill="#4a7ebb"/><path d="M6.4 6.6 H10.3 V4.7 L13 7.2 L10.3 9.7 V7.8 H6.4 Z" fill="#6a6a6a"/></svg>
<span class="t" style="left:99.5px;top:323.5px;font-size:10.1px;color:#1c1c1c;font-weight:bold;letter-spacing:0.461px;">MW 13</span>
<svg style="left:194px;top:327.2px" width="6" height="8" viewBox="0 0 6 8"><path d="M0.8 0.9 L4.6 4 L0.8 7.1 Z" fill="#fff" stroke="#8a8a8a" stroke-width="0.9"/></svg>
<span class="t" style="left:202.7px;top:323.5px;font-size:10.1px;color:#1c1c1c;font-weight:bold;letter-spacing:-0.14px;">Project Dependencies</span>
<span class="t" style="left:601px;top:323.5px;font-size:10.1px;color:#1c1c1c;font-weight:bold;letter-spacing:-0.365px;">0 days</span>
<span class="t" style="left:657px;top:323.5px;font-size:10.1px;color:#1c1c1c;font-weight:bold;letter-spacing:0.297px;">Mon 02/03/20</span>
<span class="t" style="left:731.5px;top:323.5px;font-size:10.1px;color:#1c1c1c;font-weight:bold;letter-spacing:0.297px;">Mon 02/03/20</span>
<span class="t" style="left:940.8px;top:323.5px;font-size:10.1px;color:#1c1c1c;font-weight:bold;letter-spacing:-0.198px;">### amend dependency dates</span>
<svg style="left:48px;top:358.1px" width="11" height="11" viewBox="0 0 11 11"><path d="M0.3 0.2 H10.2 V10.2 H4 L0.3 6.6 Z" fill="#e9c57d"/><path d="M0.3 6.3 H4.1 V10.2" fill="none" stroke="#fff" stroke-width="0.9"/></svg>
<svg style="left:151.4px;top:359.8px" width="14" height="11" viewBox="0 0 14 11"><rect x="0.2" y="0.2" width="10.4" height="4.7" fill="#4a7ebb"/><path d="M6.4 6.6 H10.3 V4.7 L13 7.2 L10.3 9.7 V7.8 H6.4 Z" fill="#6a6a6a"/></svg>
<span class="t" style="left:99.5px;top:356.5px;font-size:10.1px;color:#1c1c1c;font-weight:bold;letter-spacing:0.461px;">MW 14</span>
<svg style="left:194px;top:360.2px" width="6" height="8" viewBox="0 0 6 8"><path d="M0.8 0.9 L4.6 4 L0.8 7.1 Z" fill="#fff" stroke="#8a8a8a" stroke-width="0.9"/></svg>
<span class="t" style="left:202.7px;top:356.5px;font-size:10.1px;color:#1c1c1c;font-weight:bold;letter-spacing:-0.129px;">Key Project Milestones</span>
<span class="t" style="left:601px;top:356.5px;font-size:10.1px;color:#1c1c1c;font-weight:bold;letter-spacing:-0.365px;">0 days</span>
<span class="t" style="left:657px;top:356.5px;font-size:10.1px;color:#1c1c1c;font-weight:bold;letter-spacing:0.297px;">Mon 02/03/20</span>
<span class="t" style="left:731.5px;top:356.5px;font-size:10.1px;color:#1c1c1c;font-weight:bold;letter-spacing:0.297px;">Mon 02/03/20</span>
<span class="t" style="right:372.2px;top:356.5px;font-size:10.4px;color:#1c1c1c;letter-spacing:0.155px;">### amend milestone dates</span>
<svg style="left:48px;top:391.1px" width="11" height="11" viewBox="0 0 11 11"><path d="M0.3 0.2 H10.2 V10.2 H4 L0.3 6.6 Z" fill="#e9c57d"/><path d="M0.3 6.3 H4.1 V10.2" fill="none" stroke="#fff" stroke-width="0.9"/></svg>
<svg style="left:151.4px;top:392.8px" width="14" height="11" viewBox="0 0 14 11"><rect x="0.2" y="0.2" width="10.4" height="4.7" fill="#4a7ebb"/><path d="M6.4 6.6 H10.3 V4.7 L13 7.2 L10.3 9.7 V7.8 H6.4 Z" fill="#6a6a6a"/></svg>
<span class="t" style="left:99.5px;top:389.5px;font-size:10.1px;color:#1c1c1c;font-weight:bold;letter-spacing:0.461px;">MW 15</span>
<svg style="left:194px;top:393.2px" width="6" height="8" viewBox="0 0 6 8"><path d="M0.8 0.9 L4.6 4 L0.8 7.1 Z" fill="#fff" stroke="#8a8a8a" stroke-width="0.9"/></svg>
<span class="t" style="left:202.7px;top:389.5px;font-size:10.1px;color:#1c1c1c;font-weight:bold;letter-spacing:-0.215px;">Directing a project (DAP)</span>
<span class="t" style="left:601px;top:389.5px;font-size:10.1px;color:#1c1c1c;font-weight:bold;letter-spacing:-0.444px;">95 days?</span>
<span class="t" style="left:657px;top:389.5px;font-size:10.1px;color:#1c1c1c;font-weight:bold;letter-spacing:0.297px;">Mon 02/03/20</span>
<span class="t" style="left:731.5px;top:389.5px;font-size:10.1px;color:#1c1c1c;font-weight:bold;letter-spacing:0.074px;">Thu 09/07/20</span>
<span class="t" style="left:940.8px;top:389.5px;font-size:10.1px;color:#1c1c1c;font-weight:bold;letter-spacing:-0.157px;">Directing a Project...</span>
<svg style="left:48px;top:424.1px" width="11" height="11" viewBox="0 0 11 11"><path d="M0.3 0.2 H10.2 V10.2 H4 L0.3 6.6 Z" fill="#e9c57d"/><path d="M0.3 6.3 H4.1 V10.2" fill="none" stroke="#fff" stroke-width="0.9"/></svg>
<svg style="left:151.4px;top:425.8px" width="14" height="11" viewBox="0 0 14 11"><rect x="0.2" y="0.2" width="10.4" height="4.7" fill="#4a7ebb"/><path d="M6.4 6.6 H10.3 V4.7 L13 7.2 L10.3 9.7 V7.8 H6.4 Z" fill="#6a6a6a"/></svg>
<span class="t" style="left:99.5px;top:422.5px;font-size:10.1px;color:#1c1c1c;font-weight:bold;letter-spacing:0.461px;">MW 16</span>
<svg style="left:193.6px;top:426.8px" width="6" height="6" viewBox="0 0 6 6"><path d="M4.6 0.2 V4.6 H0.2 Z" fill="#222"/></svg>
<span class="t" style="left:202.7px;top:422.5px;font-size:10.1px;color:#1c1c1c;font-weight:bold;letter-spacing:-0.282px;">Starting up a project (SUAP)</span>
<span class="t" style="left:601px;top:422.5px;font-size:10.1px;color:#1c1c1c;font-weight:bold;letter-spacing:-0.444px;">10 days?</span>
<span class="t" style="left:657px;top:422.5px;font-size:10.1px;color:#1c1c1c;font-weight:bold;letter-spacing:0.297px;">Mon 02/03/20</span>
<span class="t" style="left:731.5px;top:422.5px;font-size:10.1px;color:#1c1c1c;font-weight:bold;letter-spacing:0.065px;">Fri 13/03/20</span>
<span class="t" style="left:940.8px;top:422.5px;font-size:10.1px;color:#1c1c1c;font-weight:bold;letter-spacing:-0.152px;">### amend all durations...</span>
<svg style="left:151.4px;top:442.3px" width="14" height="11" viewBox="0 0 14 11"><rect x="0.2" y="0.2" width="10.4" height="4.7" fill="#4a7ebb"/><path d="M6.4 6.6 H10.3 V4.7 L13 7.2 L10.3 9.7 V7.8 H6.4 Z" fill="#6a6a6a"/></svg>
<span class="t" style="left:99.5px;top:438.5px;font-size:10.4px;color:#1c1c1c;letter-spacing:-0.239px;">MW 16.1</span>
<span class="t" style="left:214.7px;top:438.5px;font-size:10.2px;color:#1c1c1c;font-style:italic;letter-spacing:-0.103px;">Starting up a project (SUAP) START</span>
<span class="t" style="left:601px;top:438.5px;font-size:10.4px;color:#1c1c1c;letter-spacing:-0.196px;">0 days</span>
<span class="t" style="left:657px;top:438.5px;font-size:10.4px;color:#1c1c1c;letter-spacing:0.082px;">Mon 02/03/20</span>
<span class="t" style="left:731.5px;top:438.5px;font-size:10.4px;color:#1c1c1c;letter-spacing:0.082px;">Mon 02/03/20</span>
<span class="t" style="left:805.5px;top:438.5px;font-size:10.4px;color:#1c1c1c;">1</span>
<svg style="left:48px;top:457.1px" width="11" height="11" viewBox="0 0 11 11"><path d="M0.3 0.2 H10.2 V10.2 H4 L0.3 6.6 Z" fill="#e9c57d"/><path d="M0.3 6.3 H4.1 V10.2" fill="none" stroke="#fff" stroke-width="0.9"/></svg>
<svg style="left:151.4px;top:458.8px" width="14" height="11" viewBox="0 0 14 11"><rect x="0.2" y="0.2" width="10.4" height="4.7" fill="#4a7ebb"/><path d="M6.4 6.6 H10.3 V4.7 L13 7.2 L10.3 9.7 V7.8 H6.4 Z" fill="#6a6a6a"/></svg>
<span class="t" style="left:99.5px;top:455.5px;font-size:10.4px;color:#1c1c1c;letter-spacing:-0.239px;">MW 16.2</span>
<span class="t" style="left:214.7px;top:455.5px;font-size:10.4px;color:#1c1c1c;letter-spacing:0.044px;">Appoint the Executive and the Project Manager</span>
<span class="t" style="left:601px;top:455.5px;font-size:10.4px;color:#1c1c1c;letter-spacing:-0.412px;">1 day?</span>
<span class="t" style="left:657px;top:455.5px;font-size:10.4px;color:#1c1c1c;letter-spacing:0.082px;">Mon 02/03/20</span>
<span class="t" style="left:731.5px;top:455.5px;font-size:10.4px;color:#1c1c1c;letter-spacing:0.082px;">Mon 02/03/20</span>
<span class="t" style="left:805.5px;top:455.5px;font-size:10.4px;color:#1c1c1c;">57</span>
<span class="t" style="left:940.8px;top:455.5px;font-size:10.4px;color:#1c1c1c;letter-spacing:0.05px;">Appoint the Executive and the Project Manager...</span>
<svg style="left:48px;top:487.1px" width="11" height="11" viewBox="0 0 11 11"><path d="M0.3 0.2 H10.2 V10.2 H4 L0.3 6.6 Z" fill="#e9c57d"/><path d="M0.3 6.3 H4.1 V10.2" fill="none" stroke="#fff" stroke-width="0.9"/></svg>
<svg style="left:151.4px;top:488.8px" width="14" height="11" viewBox="0 0 14 11"><rect x="0.2" y="0.2" width="10.4" height="4.7" fill="#4a7ebb"/><path d="M6.4 6.6 H10.3 V4.7 L13 7.2 L10.3 9.7 V7.8 H6.4 Z" fill="#6a6a6a"/></svg>
<span class="t" style="left:99.5px;top:485.5px;font-size:10.4px;color:#1c1c1c;letter-spacing:-0.239px;">MW 16.3</span>
<span class="t" style="left:214.7px;top:485.5px;font-size:10.4px;color:#1c1c1c;letter-spacing:-0.018px;">Capture previous lessons</span>
<span class="t" style="left:601px;top:485.5px;font-size:10.4px;color:#1c1c1c;letter-spacing:-0.412px;">1 day?</span>
<span class="t" style="left:657px;top:485.5px;font-size:10.4px;color:#1c1c1c;letter-spacing:-0.001px;">Tue 03/03/20</span>
<span class="t" style="left:731.5px;top:485.5px;font-size:10.4px;color:#1c1c1c;letter-spacing:-0.001px;">Tue 03/03/20</span>
<span class="t" style="left:805.5px;top:485.5px;font-size:10.4px;color:#1c1c1c;">58</span>
<span class="t" style="right:358.8px;top:485.5px;font-size:10.4px;color:#1c1c1c;letter-spacing:-0.301px;">Capture previous Lessons Log...</span>
<svg style="left:48px;top:503.6px" width="11" height="11" viewBox="0 0 11 11"><path d="M0.3 0.2 H10.2 V10.2 H4 L0.3 6.6 Z" fill="#e9c57d"/><path d="M0.3 6.3 H4.1 V10.2" fill="none" stroke="#fff" stroke-width="0.9"/></svg>
<svg style="left:151.4px;top:505.3px" width="14" height="11" viewBox="0 0 14 11"><rect x="0.2" y="0.2" width="10.4" height="4.7" fill="#4a7ebb"/><path d="M6.4 6.6 H10.3 V4.7 L13 7.2 L10.3 9.7 V7.8 H6.4 Z" fill="#6a6a6a"/></svg>
<span class="t" style="left:99.5px;top:501.5px;font-size:10.4px;color:#1c1c1c;letter-spacing:-0.239px;">MW 16.4</span>
<span class="t" style="left:214.7px;top:501.5px;font-size:10.4px;color:#2a7ac7;letter-spacing:-0.286px;">Create Lessons Log</span>
<span class="t" style="left:601px;top:501.5px;font-size:10.4px;color:#1c1c1c;letter-spacing:-0.305px;">0.1 days</span>
<span class="t" style="left:657px;top:501.5px;font-size:10.4px;color:#1c1c1c;letter-spacing:0.075px;">Wed 04/03/20</span>
<span class="t" style="left:731.5px;top:501.5px;font-size:10.4px;color:#1c1c1c;letter-spacing:0.075px;">Wed 04/03/20</span>
<span class="t" style="left:805.5px;top:501.5px;font-size:10.4px;color:#1c1c1c;">59</span>
<span class="t" style="left:940.8px;top:501.5px;font-size:10.4px;color:#1c1c1c;letter-spacing:-0.358px;">Lessons Log...</span>
<svg style="left:48px;top:520.1px" width="11" height="11" viewBox="0 0 11 11"><path d="M0.3 0.2 H10.2 V10.2 H4 L0.3 6.6 Z" fill="#e9c57d"/><path d="M0.3 6.3 H4.1 V10.2" fill="none" stroke="#fff" stroke-width="0.9"/></svg>
<svg style="left:151.4px;top:521.8px" width="14" height="11" viewBox="0 0 14 11"><rect x="0.2" y="0.2" width="10.4" height="4.7" fill="#4a7ebb"/><path d="M6.4 6.6 H10.3 V4.7 L13 7.2 L10.3 9.7 V7.8 H6.4 Z" fill="#6a6a6a"/></svg>
<span class="t" style="left:99.5px;top:518.5px;font-size:10.4px;color:#1c1c1c;letter-spacing:-0.239px;">MW 16.5</span>
<span class="t" style="left:214.7px;top:518.5px;font-size:10.4px;color:#1c1c1c;letter-spacing:0.059px;">Design and appoint the project management team</span>
<span class="t" style="left:601px;top:518.5px;font-size:10.4px;color:#1c1c1c;letter-spacing:-0.412px;">1 day?</span>
<span class="t" style="left:657px;top:518.5px;font-size:10.4px;color:#1c1c1c;letter-spacing:0.075px;">Wed 04/03/20</span>
<span class="t" style="left:731.5px;top:518.5px;font-size:10.4px;color:#1c1c1c;letter-spacing:-0.037px;">Thu 05/03/20</span>
<span class="t" style="left:805.5px;top:518.5px;font-size:10.4px;color:#1c1c1c;">60</span>
<span class="t" style="right:313.5px;top:518.5px;font-size:10.4px;color:#1c1c1c;letter-spacing:-0.218px;">Project Management Team in PRINCE2...</span>
<svg style="left:48px;top:536.6px" width="11" height="11" viewBox="0 0 11 11"><path d="M0.3 0.2 H10.2 V10.2 H4 L0.3 6.6 Z" fill="#e9c57d"/><path d="M0.3 6.3 H4.1 V10.2" fill="none" stroke="#fff" stroke-width="0.9"/></svg>
<svg style="left:151.4px;top:538.3px" width="14" height="11" viewBox="0 0 14 11"><rect x="0.2" y="0.2" width="10.4" height="4.7" fill="#4a7ebb"/><path d="M6.4 6.6 H10.3 V4.7 L13 7.2 L10.3 9.7 V7.8 H6.4 Z" fill="#6a6a6a"/></svg>
<div style="left:45px;top:534px;width:1139px;height:16.5px;background:rgba(0,0,0,0.235);"></div>
<svg style="left:40px;top:530.3px" width="1144.2" height="26" viewBox="0 0 1144.2 26"><rect x="5.3" y="3.7" width="1150" height="16.8" fill="none" stroke="#38803a" stroke-width="1.7"/></svg>
<span class="t" style="left:99.5px;top:534.5px;font-size:10.4px;color:#1c1c1c;letter-spacing:-0.239px;">MW 16.6</span>
<span class="t" style="left:214.7px;top:534.5px;font-size:10.4px;color:#1c1c1c;letter-spacing:-0.003px;">Prepare the outline business case</span>
<span class="t" style="left:601px;top:534.5px;font-size:10.4px;color:#1c1c1c;letter-spacing:-0.412px;">1 day?</span>
<span class="t" style="left:657px;top:534.5px;font-size:10.4px;color:#1c1c1c;letter-spacing:-0.037px;">Thu 05/03/20</span>
<span class="t" style="left:731.5px;top:534.5px;font-size:10.4px;color:#1c1c1c;letter-spacing:-0.001px;">Fri 06/03/20</span>
<span class="t" style="left:805.5px;top:534.5px;font-size:10.4px;color:#1c1c1c;">61</span>
<span class="t" style="left:940.8px;top:534.5px;font-size:10.4px;color:#1c1c1c;letter-spacing:-0.086px;">Prepare the Outline Business Case...</span>
<svg style="left:48px;top:553.1px" width="11" height="11" viewBox="0 0 11 11"><path d="M0.3 0.2 H10.2 V10.2 H4 L0.3 6.6 Z" fill="#e9c57d"/><path d="M0.3 6.3 H4.1 V10.2" fill="none" stroke="#fff" stroke-width="0.9"/></svg>
<svg style="left:151.4px;top:554.8px" width="14" height="11" viewBox="0 0 14 11"><rect x="0.2" y="0.2" width="10.4" height="4.7" fill="#4a7ebb"/><path d="M6.4 6.6 H10.3 V4.7 L13 7.2 L10.3 9.7 V7.8 H6.4 Z" fill="#6a6a6a"/></svg>
<span class="t" style="left:99.5px;top:551.5px;font-size:10.4px;color:#1c1c1c;letter-spacing:-0.239px;">MW 16.7</span>
<span class="t" style="left:214.7px;top:551.5px;font-size:10.4px;color:#1c1c1c;letter-spacing:0.062px;">Select the project approach and assemble the project brief</span>
<span class="t" style="left:601px;top:551.5px;font-size:10.4px;color:#1c1c1c;letter-spacing:-0.412px;">1 day?</span>
<span class="t" style="left:657px;top:551.5px;font-size:10.4px;color:#1c1c1c;letter-spacing:-0.001px;">Fri 06/03/20</span>
<span class="t" style="left:731.5px;top:551.5px;font-size:10.4px;color:#1c1c1c;letter-spacing:0.082px;">Mon 09/03/20</span>
<span class="t" style="left:805.5px;top:551.5px;font-size:10.4px;color:#1c1c1c;">62</span>
<span class="t" style="right:318.2px;top:551.5px;font-size:10.4px;color:#1c1c1c;letter-spacing:-0.204px;">The Starting Up a Project process...</span>
<svg style="left:48px;top:569.6px" width="11" height="11" viewBox="0 0 11 11"><path d="M0.3 0.2 H10.2 V10.2 H4 L0.3 6.6 Z" fill="#e9c57d"/><path d="M0.3 6.3 H4.1 V10.2" fill="none" stroke="#fff" stroke-width="0.9"/></svg>
<svg style="left:151.4px;top:571.3px" width="14" height="11" viewBox="0 0 14 11"><rect x="0.2" y="0.2" width="10.4" height="4.7" fill="#4a7ebb"/><path d="M6.4 6.6 H10.3 V4.7 L13 7.2 L10.3 9.7 V7.8 H6.4 Z" fill="#6a6a6a"/></svg>
<span class="t" style="left:99.5px;top:567.5px;font-size:10.4px;color:#1c1c1c;letter-spacing:-0.239px;">MW 16.8</span>
<span class="t" style="left:214.7px;top:567.5px;font-size:10.4px;color:#1c1c1c;letter-spacing:0.125px;">Plan the initiation stage</span>
<span class="t" style="left:601px;top:567.5px;font-size:10.4px;color:#1c1c1c;letter-spacing:-0.196px;">3 days</span>
<span class="t" style="left:657px;top:567.5px;font-size:10.4px;color:#1c1c1c;letter-spacing:0.082px;">Mon 09/03/20</span>
<span class="t" style="left:731.5px;top:567.5px;font-size:10.4px;color:#1c1c1c;letter-spacing:-0.037px;">Thu 12/03/20</span>
<span class="t" style="left:805.5px;top:567.5px;font-size:10.4px;color:#1c1c1c;">63</span>
<span class="t" style="right:305.3px;top:567.5px;font-size:10.4px;color:#1c1c1c;letter-spacing:-0.121px;">Initiation Stage Plan – what to consider?...</span>
<svg style="left:48px;top:586.1px" width="11" height="11" viewBox="0 0 11 11"><path d="M0.3 0.2 H10.2 V10.2 H4 L0.3 6.6 Z" fill="#e9c57d"/><path d="M0.3 6.3 H4.1 V10.2" fill="none" stroke="#fff" stroke-width="0.9"/></svg>
<svg style="left:151.4px;top:587.8px" width="14" height="11" viewBox="0 0 14 11"><rect x="0.2" y="0.2" width="10.4" height="4.7" fill="#4a7ebb"/><path d="M6.4 6.6 H10.3 V4.7 L13 7.2 L10.3 9.7 V7.8 H6.4 Z" fill="#6a6a6a"/></svg>
<span class="t" style="left:99.5px;top:584.5px;font-size:10.4px;color:#1c1c1c;letter-spacing:-0.239px;">MW 16.9</span>
<span class="t" style="left:214.7px;top:584.5px;font-size:10.4px;color:#2a7ac7;letter-spacing:-0.151px;">Create Daily Log</span>
<span class="t" style="left:601px;top:584.5px;font-size:10.4px;color:#1c1c1c;letter-spacing:-0.196px;">3 days</span>
<span class="t" style="left:657px;top:584.5px;font-size:10.4px;color:#1c1c1c;letter-spacing:0.082px;">Mon 09/03/20</span>
<span class="t" style="left:731.5px;top:584.5px;font-size:10.4px;color:#1c1c1c;letter-spacing:-0.037px;">Thu 12/03/20</span>
<span class="t" style="left:805.5px;top:584.5px;font-size:10.4px;color:#1c1c1c;">63</span>
<span class="t" style="left:940.8px;top:584.5px;font-size:10.4px;color:#1c1c1c;letter-spacing:-0.229px;">The Daily Log...</span>
<svg style="left:151.4px;top:604.3px" width="14" height="11" viewBox="0 0 14 11"><rect x="0.2" y="0.2" width="10.4" height="4.7" fill="#4a7ebb"/><path d="M6.4 6.6 H10.3 V4.7 L13 7.2 L10.3 9.7 V7.8 H6.4 Z" fill="#6a6a6a"/></svg>
<span class="t" style="left:99.5px;top:600.5px;font-size:10.4px;color:#1c1c1c;letter-spacing:-0.216px;">MW 16.10</span>
<span class="t" style="left:214.7px;top:600.5px;font-size:10.1px;color:#c8651b;font-weight:bold;letter-spacing:-0.198px;">Event/Decision : Request to initiate a project &gt;&gt; DAP</span>
<span class="t" style="left:601px;top:600.5px;font-size:10.4px;color:#1c1c1c;letter-spacing:-0.196px;">3 days</span>
<span class="t" style="left:657px;top:600.5px;font-size:10.4px;color:#1c1c1c;letter-spacing:0.082px;">Mon 09/03/20</span>
<span class="t" style="left:731.5px;top:600.5px;font-size:10.4px;color:#1c1c1c;letter-spacing:-0.037px;">Thu 12/03/20</span>
<span class="t" style="left:805.5px;top:600.5px;font-size:10.4px;color:#1c1c1c;">63</span>
<svg style="left:48px;top:619.1px" width="11" height="11" viewBox="0 0 11 11"><path d="M0.3 0.2 H10.2 V10.2 H4 L0.3 6.6 Z" fill="#e9c57d"/><path d="M0.3 6.3 H4.1 V10.2" fill="none" stroke="#fff" stroke-width="0.9"/></svg>
<svg style="left:151.4px;top:620.8px" width="14" height="11" viewBox="0 0 14 11"><rect x="0.2" y="0.2" width="10.4" height="4.7" fill="#4a7ebb"/><path d="M6.4 6.6 H10.3 V4.7 L13 7.2 L10.3 9.7 V7.8 H6.4 Z" fill="#6a6a6a"/></svg>
<span class="t" style="left:99.5px;top:617.5px;font-size:10.4px;color:#1c1c1c;letter-spacing:-0.107px;">MW 16.11</span>
<span class="t" style="left:214.7px;top:617.5px;font-size:10.4px;color:#1c1c1c;letter-spacing:-0.177px;">Task n</span>
<span class="t" style="left:601px;top:617.5px;font-size:10.4px;color:#1c1c1c;letter-spacing:-0.03px;">2 wks</span>
<span class="t" style="left:657px;top:617.5px;font-size:10.4px;color:#1c1c1c;letter-spacing:0.082px;">Mon 02/03/20</span>
<span class="t" style="left:731.5px;top:617.5px;font-size:10.4px;color:#1c1c1c;letter-spacing:-0.001px;">Fri 13/03/20</span>
<span class="t" style="left:805.5px;top:617.5px;font-size:10.4px;color:#1c1c1c;">57</span>
<span class="t" style="right:309.6px;top:617.5px;font-size:10.4px;color:#1c1c1c;letter-spacing:0.183px;">### amend tasks/durations appropriately</span>
<svg style="left:151.4px;top:650.8px" width="14" height="11" viewBox="0 0 14 11"><rect x="0.2" y="0.2" width="10.4" height="4.7" fill="#4a7ebb"/><path d="M6.4 6.6 H10.3 V4.7 L13 7.2 L10.3 9.7 V7.8 H6.4 Z" fill="#6a6a6a"/></svg>
<span class="t" style="left:99.5px;top:647.5px;font-size:10.4px;color:#1c1c1c;letter-spacing:-0.216px;">MW 16.12</span>
<span class="t" style="left:214.7px;top:647.5px;font-size:10.2px;color:#1c1c1c;font-style:italic;letter-spacing:-0.047px;">Starting up a project (SUAP) END</span>
<span class="t" style="left:601px;top:647.5px;font-size:10.4px;color:#1c1c1c;letter-spacing:-0.196px;">0 days</span>
<span class="t" style="left:657px;top:647.5px;font-size:10.4px;color:#1c1c1c;letter-spacing:-0.001px;">Fri 13/03/20</span>
<span class="t" style="left:731.5px;top:647.5px;font-size:10.4px;color:#1c1c1c;letter-spacing:-0.001px;">Fri 13/03/20</span>
<span class="t" style="left:805.5px;top:647.5px;font-size:10.4px;color:#1c1c1c;letter-spacing:-0.418px;">67</span>
<svg style="left:48px;top:682.1px" width="11" height="11" viewBox="0 0 11 11"><path d="M0.3 0.2 H10.2 V10.2 H4 L0.3 6.6 Z" fill="#e9c57d"/><path d="M0.3 6.3 H4.1 V10.2" fill="none" stroke="#fff" stroke-width="0.9"/></svg>
<svg style="left:151.4px;top:683.8px" width="14" height="11" viewBox="0 0 14 11"><rect x="0.2" y="0.2" width="10.4" height="4.7" fill="#4a7ebb"/><path d="M6.4 6.6 H10.3 V4.7 L13 7.2 L10.3 9.7 V7.8 H6.4 Z" fill="#6a6a6a"/></svg>
<span class="t" style="left:99.5px;top:680.5px;font-size:10.1px;color:#1c1c1c;font-weight:bold;letter-spacing:0.461px;">MW 17</span>
<svg style="left:194px;top:684.2px" width="6" height="8" viewBox="0 0 6 8"><path d="M0.8 0.9 L4.6 4 L0.8 7.1 Z" fill="#fff" stroke="#8a8a8a" stroke-width="0.9"/></svg>
<span class="t" style="left:202.7px;top:680.5px;font-size:10.1px;color:#1c1c1c;font-weight:bold;letter-spacing:-0.099px;">Initiating a project (IAP)</span>
<span class="t" style="left:601px;top:680.5px;font-size:10.1px;color:#1c1c1c;font-weight:bold;letter-spacing:-0.444px;">10 days?</span>
<span class="t" style="left:657px;top:680.5px;font-size:10.1px;color:#1c1c1c;font-weight:bold;letter-spacing:0.297px;">Mon 16/03/20</span>
<span class="t" style="left:731.5px;top:680.5px;font-size:10.1px;color:#1c1c1c;font-weight:bold;letter-spacing:0.065px;">Fri 27/03/20</span>
<span class="t" style="left:940.8px;top:680.5px;font-size:10.1px;color:#1c1c1c;font-weight:bold;letter-spacing:-0.073px;">Initiating a Project...</span>
<svg style="left:48px;top:715.1px" width="11" height="11" viewBox="0 0 11 11"><path d="M0.3 0.2 H10.2 V10.2 H4 L0.3 6.6 Z" fill="#e9c57d"/><path d="M0.3 6.3 H4.1 V10.2" fill="none" stroke="#fff" stroke-width="0.9"/></svg>
<svg style="left:151.4px;top:716.8px" width="14" height="11" viewBox="0 0 14 11"><rect x="0.2" y="0.2" width="10.4" height="4.7" fill="#4a7ebb"/><path d="M6.4 6.6 H10.3 V4.7 L13 7.2 L10.3 9.7 V7.8 H6.4 Z" fill="#6a6a6a"/></svg>
<span class="t" style="left:99.5px;top:713.5px;font-size:10.1px;color:#1c1c1c;font-weight:bold;letter-spacing:0.461px;">MW 18</span>
<svg style="left:194px;top:717.2px" width="6" height="8" viewBox="0 0 6 8"><path d="M0.8 0.9 L4.6 4 L0.8 7.1 Z" fill="#fff" stroke="#8a8a8a" stroke-width="0.9"/></svg>
<span class="t" style="left:202.7px;top:713.5px;font-size:10.1px;color:#1c1c1c;font-weight:bold;letter-spacing:-0.296px;">Controlling a stage (CAS) One</span>
<span class="t" style="left:601px;top:713.5px;font-size:10.1px;color:#1c1c1c;font-weight:bold;letter-spacing:-0.444px;">25 days?</span>
<span class="t" style="left:657px;top:713.5px;font-size:10.1px;color:#1c1c1c;font-weight:bold;letter-spacing:0.297px;">Mon 30/03/20</span>
<span class="t" style="left:731.5px;top:713.5px;font-size:10.1px;color:#1c1c1c;font-weight:bold;letter-spacing:0.165px;">Tue 05/05/20</span>
<span class="t" style="left:940.8px;top:713.5px;font-size:10.1px;color:#1c1c1c;font-weight:bold;letter-spacing:-0.247px;">### add more stages as required and number</span>
<svg style="left:48px;top:748.1px" width="11" height="11" viewBox="0 0 11 11"><path d="M0.3 0.2 H10.2 V10.2 H4 L0.3 6.6 Z" fill="#e9c57d"/><path d="M0.3 6.3 H4.1 V10.2" fill="none" stroke="#fff" stroke-width="0.9"/></svg>
<svg style="left:151.4px;top:749.8px" width="14" height="11" viewBox="0 0 14 11"><rect x="0.2" y="0.2" width="10.4" height="4.7" fill="#4a7ebb"/><path d="M6.4 6.6 H10.3 V4.7 L13 7.2 L10.3 9.7 V7.8 H6.4 Z" fill="#6a6a6a"/></svg>
<span class="t" style="left:99.5px;top:746.5px;font-size:10.1px;color:#1c1c1c;font-weight:bold;letter-spacing:0.461px;">MW 19</span>
<svg style="left:194px;top:750.2px" width="6" height="8" viewBox="0 0 6 8"><path d="M0.8 0.9 L4.6 4 L0.8 7.1 Z" fill="#fff" stroke="#8a8a8a" stroke-width="0.9"/></svg>
<span class="t" style="left:202.7px;top:746.5px;font-size:10.1px;color:#1c1c1c;font-weight:bold;letter-spacing:-0.145px;">Managing product delivery (MPD) One</span>
<span class="t" style="left:601px;top:746.5px;font-size:10.1px;color:#1c1c1c;font-weight:bold;letter-spacing:-0.444px;">25 days?</span>
<span class="t" style="left:657px;top:746.5px;font-size:10.1px;color:#1c1c1c;font-weight:bold;letter-spacing:0.297px;">Mon 30/03/20</span>
<span class="t" style="left:731.5px;top:746.5px;font-size:10.1px;color:#1c1c1c;font-weight:bold;letter-spacing:0.165px;">Tue 05/05/20</span>
<span class="t" style="left:940.8px;top:746.5px;font-size:10.1px;color:#1c1c1c;font-weight:bold;letter-spacing:-0.226px;">### amend to align with stages</span>
<div style="left:1184px;top:48px;width:3.4px;height:745px;background:#e6e6e6;"></div>
<div style="left:1187px;top:48px;width:1px;height:745px;background:#b9b9b9;"></div>
<div style="left:1188px;top:48px;width:239.2px;height:28.2px;background:#e8e8e8;"></div>
<div style="left:1188px;top:75.6px;width:239.2px;height:1px;background:#cfcfcf;"></div>
<div style="left:1427.2px;top:48px;width:12.8px;height:745px;background:#f1f1f1;"></div>
<span class="t" style="left:1254.8px;top:48px;font-size:8.4px;color:#7e8894;letter-spacing:0.099px;">March 2020</span>
<div style="left:1400px;top:48px;width:27.2px;height:14px;overflow:hidden;">
<span class="t" style="left:3.5px;top:0px;font-size:8.4px;color:#7e8894;">April 2020</span>
</div>
<div style="left:1250px;top:50px;width:1px;height:11px;background:#d6d6d6;"></div>
<div style="left:1399.2px;top:50px;width:1px;height:11px;background:#d6d6d6;"></div>
<span class="t" style="left:1159.2px;width:80px;text-align:center;top:60px;font-size:8.6px;color:#7e8894;">17</span>
<div style="left:1210.8px;top:66px;width:1px;height:10px;background:#d6d6d6;"></div>
<span class="t" style="left:1183.25px;width:80px;text-align:center;top:60px;font-size:8.6px;color:#7e8894;">22</span>
<div style="left:1234.85px;top:66px;width:1px;height:10px;background:#d6d6d6;"></div>
<span class="t" style="left:1207.3px;width:80px;text-align:center;top:60px;font-size:8.6px;color:#7e8894;">27</span>
<div style="left:1258.9px;top:66px;width:1px;height:10px;background:#d6d6d6;"></div>
<span class="t" style="left:1231.35px;width:80px;text-align:center;top:60px;font-size:8.6px;color:#7e8894;">03</span>
<div style="left:1282.95px;top:66px;width:1px;height:10px;background:#d6d6d6;"></div>
<span class="t" style="left:1255.4px;width:80px;text-align:center;top:60px;font-size:8.6px;color:#7e8894;">08</span>
<div style="left:1307px;top:66px;width:1px;height:10px;background:#d6d6d6;"></div>
<span class="t" style="left:1279.45px;width:80px;text-align:center;top:60px;font-size:8.6px;color:#7e8894;">13</span>
<div style="left:1331.05px;top:66px;width:1px;height:10px;background:#d6d6d6;"></div>
<span class="t" style="left:1303.5px;width:80px;text-align:center;top:60px;font-size:8.6px;color:#7e8894;">18</span>
<div style="left:1355.1px;top:66px;width:1px;height:10px;background:#d6d6d6;"></div>
<span class="t" style="left:1327.55px;width:80px;text-align:center;top:60px;font-size:8.6px;color:#7e8894;">23</span>
<div style="left:1379.15px;top:66px;width:1px;height:10px;background:#d6d6d6;"></div>
<span class="t" style="left:1351.6px;width:80px;text-align:center;top:60px;font-size:8.6px;color:#7e8894;">28</span>
<div style="left:1403.2px;top:66px;width:1px;height:10px;background:#d6d6d6;"></div>
<span class="t" style="left:1375.65px;width:80px;text-align:center;top:60px;font-size:8.6px;color:#7e8894;">02</span>
<svg style="left:0;top:0" width="1440" height="810" viewBox="0 0 1440 810"><line x1="1255.4" y1="79" x2="1255.4" y2="779" stroke="#c9c9c9" stroke-width="1" stroke-dasharray="1.2 1.8"/><line x1="1283.4" y1="76.5" x2="1283.4" y2="779" stroke="#8fbf8f" stroke-width="1"/><path d="M1188 534.4 H1427.2 M1188 550.6 H1427.2" stroke="#8c8c8c" stroke-width="1" fill="none"/><path d="M1254.8 89.5 V81.9 H1427.2" fill="none" stroke="#858585" stroke-width="1.2" stroke-linejoin="miter"/><path d="M1255.4 401.3 V393.7 H1427.2" fill="none" stroke="#111" stroke-width="2" stroke-linejoin="miter"/><path d="M1255.4 434.3 V426.7 H1309.6 V434.3" fill="none" stroke="#111" stroke-width="2" stroke-linejoin="miter"/><path d="M1324.2 692.3 V684.7 H1378.4 V692.3" fill="none" stroke="#111" stroke-width="2" stroke-linejoin="miter"/><path d="M1392 725.3 V717.7 H1427.2" fill="none" stroke="#111" stroke-width="2" stroke-linejoin="miter"/><path d="M1392 758.3 V750.7 H1427.2" fill="none" stroke="#111" stroke-width="2" stroke-linejoin="miter"/><rect x="1255.5" y="129.1" width="171.7" height="8" fill="#705a9e"/><rect x="1255.5" y="145.6" width="54.7" height="8" fill="#705a9e"/><rect x="1324.5" y="162.1" width="54.3" height="8" fill="#705a9e"/><rect x="1392.9" y="178.6" width="34.3" height="8" fill="#705a9e"/><rect x="1392.9" y="195.1" width="34.3" height="8" fill="#705a9e"/><rect x="1255.2" y="459.1" width="3.3" height="8" fill="#705a9e"/><rect x="1257.7" y="489.1" width="6" height="8" fill="#705a9e"/><rect x="1256" y="505.6" width="1.8" height="8" fill="#705a9e"/><rect x="1262.9" y="522.1" width="5.1" height="8" fill="#705a9e"/><rect x="1267.6" y="538.6" width="5" height="8" fill="#705a9e"/><rect x="1272.4" y="555.1" width="4.6" height="8" fill="#705a9e"/><rect x="1277" y="571.6" width="14.4" height="8" fill="#705a9e"/><rect x="1277" y="588.1" width="14.4" height="8" fill="#705a9e"/><rect x="1277" y="604.6" width="14.4" height="8" fill="#705a9e"/><rect x="1255.4" y="621.1" width="55" height="8" fill="#705a9e"/><path d="M1258.5 116.5 H1259.5 Q1261.5 116.5 1261.5 118.5 V122.5 Q1261.5 124.5 1259.5 124.5 H1246.5 Q1243.5 124.5 1243.5 126.5 V444.5 Q1243.5 446.5 1246.5 446.5 H1248.5" fill="none" stroke="#222" stroke-width="1"/><path d="M1248.5 124.5 V147.5 Q1248.5 149.5 1250.5 149.5 M1248.5 133.5 H1250.5" fill="none" stroke="#222" stroke-width="1"/><path d="M1255.3 133.1 L1251.1 129.9 V136.3 Z" fill="#111"/><path d="M1255.3 149.6 L1251.1 146.4 V152.8 Z" fill="#111"/><path d="M1251.4 446.6 L1247.2 443.4 V449.8 Z" fill="#111"/><path d="M1258.5 446.5 H1259.5 Q1261.5 446.5 1261.5 448.5 V452.5 Q1261.5 454.5 1259.5 454.5 H1250.5 Q1248.5 454.5 1248.5 456.5 V623.5 Q1248.5 625.5 1250.5 625.5" fill="none" stroke="#222" stroke-width="1"/><path d="M1248.5 463.5 H1250.5" fill="none" stroke="#222" stroke-width="1"/><path d="M1254.8 463.1 L1250.6 459.9 V466.3 Z" fill="#111"/><path d="M1255.2 625.1 L1251 621.9 V628.3 Z" fill="#111"/><path d="M1310.5 149.5 H1314.5 Q1316.5 149.5 1316.5 151.5 V162.5 Q1316.5 166.5 1318.5 166.5 H1320.5" fill="none" stroke="#5c4eab" stroke-width="1"/><path d="M1324.5 166.1 L1320.3 162.9 V169.3 Z" fill="#35287f"/><path d="M1378.5 166.5 H1382.5 Q1384.5 166.5 1384.5 168.5 V195.5 Q1384.5 199.5 1387.5 199.5 H1388.5 M1384.5 182.5 H1388.5" fill="none" stroke="#5c4eab" stroke-width="1"/><path d="M1392.9 182.6 L1388.7 179.4 V185.8 Z" fill="#35287f"/><path d="M1392.9 199.1 L1388.7 195.9 V202.3 Z" fill="#35287f"/><path d="M1258.5 463.5 H1262.5 Q1264.5 463.5 1264.5 465.5 V481.5 Q1264.5 484.5 1262.5 484.5 H1254.5 Q1251.5 484.5 1251.5 486.5 V490.5 Q1251.5 493.5 1254.5 493.5 H1253.5" fill="none" stroke="#5c4eab" stroke-width="1"/><path d="M1257.7 493.1 L1253.5 489.9 V496.3 Z" fill="#35287f"/><path d="M1263.5 493.5 H1268.5 Q1270.5 493.5 1270.5 495.5 V498.5 Q1270.5 501.5 1268.5 501.5 H1259.5 Q1256.5 501.5 1256.5 503.5 V523.5 Q1256.5 526.5 1259.5 526.5" fill="none" stroke="#5c4eab" stroke-width="1"/><path d="M1262.9 526.1 L1258.7 522.9 V529.3 Z" fill="#35287f"/><path d="M1268.5 526.5 H1272.5 Q1274.5 526.5 1274.5 528.5 V531.5 Q1274.5 533.5 1272.5 533.5 H1264.5 Q1261.5 533.5 1261.5 536.5 V540.5 Q1261.5 542.5 1264.5 542.5 H1263.5" fill="none" stroke="#5c4eab" stroke-width="1"/><path d="M1267.6 542.6 L1263.4 539.4 V545.8 Z" fill="#35287f"/><path d="M1272.5 542.5 H1277.5 Q1279.5 542.5 1279.5 545.5 V547.5 Q1279.5 550.5 1277.5 550.5 H1267.5 Q1265.5 550.5 1265.5 552.5 V556.5 Q1265.5 559.5 1267.5 559.5 H1268.5" fill="none" stroke="#5c4eab" stroke-width="1"/><path d="M1272.4 559.1 L1268.2 555.9 V562.3 Z" fill="#35287f"/><path d="M1276.5 559.5 H1280.5 Q1282.5 559.5 1282.5 561.5 V564.5 Q1282.5 566.5 1280.5 566.5 H1272.5 Q1270.5 566.5 1270.5 569.5 V606.5 Q1270.5 608.5 1272.5 608.5 M1270.5 575.5 H1272.5 M1270.5 592.5 H1272.5" fill="none" stroke="#5c4eab" stroke-width="1"/><path d="M1277 575.6 L1272.8 572.4 V578.8 Z" fill="#35287f"/><path d="M1277 592.1 L1272.8 588.9 V595.3 Z" fill="#35287f"/><path d="M1277 608.6 L1272.8 605.4 V611.8 Z" fill="#35287f"/><path d="M1310.5 625.5 H1313.5 Q1316.5 625.5 1316.5 627.5 V642.5 Q1316.5 645.5 1313.5 645.5 H1301.5 Q1299.5 645.5 1299.5 648.5 V652.5 Q1299.5 655.5 1301.5 655.5" fill="none" stroke="#5c4eab" stroke-width="1"/><path d="M1306 655.1 L1301.8 651.9 V658.3 Z" fill="#35287f"/><path d="M1251.2 116.6 L1255 112.8 L1258.8 116.6 L1255 120.4 Z" fill="#111"/><path d="M1251.2 331.1 L1255 327.3 L1258.8 331.1 L1255 334.9 Z" fill="#111"/><path d="M1251.2 364.1 L1255 360.3 L1258.8 364.1 L1255 367.9 Z" fill="#111"/><path d="M1251.2 446.6 L1255 442.8 L1258.8 446.6 L1255 450.4 Z" fill="#111"/><path d="M1306.2 655.1 L1310 651.3 L1313.8 655.1 L1310 658.9 Z" fill="#111"/><line x1="1255.4" y1="113.4" x2="1255.4" y2="119.8" stroke="#bbb" stroke-width="0.8"/><line x1="1255.4" y1="327.9" x2="1255.4" y2="334.3" stroke="#bbb" stroke-width="0.8"/><line x1="1255.4" y1="360.9" x2="1255.4" y2="367.3" stroke="#bbb" stroke-width="0.8"/><line x1="1255.4" y1="443.4" x2="1255.4" y2="449.8" stroke="#bbb" stroke-width="0.8"/></svg>
<span class="t" style="left:1263.8px;top:107.5px;font-size:10.3px;color:#111;font-weight:bold;letter-spacing:-0.012px;">02/03</span>
<span class="t" style="left:1263.8px;top:321.5px;font-size:10.3px;color:#111;font-weight:bold;letter-spacing:-0.012px;">02/03</span>
<span class="t" style="left:1263.8px;top:354.5px;font-size:10.3px;color:#111;font-weight:bold;letter-spacing:-0.012px;">02/03</span>
<span class="t" style="left:1263.8px;top:437.5px;font-size:10.3px;color:#111;font-weight:bold;letter-spacing:-0.012px;">02/03</span>
<span class="t" style="left:1319px;top:645.5px;font-size:10.3px;color:#111;font-weight:bold;letter-spacing:-0.012px;">13/03</span>
<div style="left:1428px;top:49px;width:11.6px;height:11px;background:#fff;border:1px solid #c6c6c6;box-sizing:border-box;"></div>
<svg style="left:1431px;top:52.8px" width="6" height="4" viewBox="0 0 6 4"><path d="M0.2 3.4 L2.8 0.4 L5.4 3.4 Z" fill="#606060"/></svg>
<div style="left:1428px;top:60px;width:11.2px;height:550.6px;background:#fff;border:1px solid #b4b4b4;box-sizing:border-box;"></div>
<div style="left:1428px;top:763.4px;width:11.6px;height:10.4px;background:#fff;border:1px solid #c6c6c6;box-sizing:border-box;"></div>
<svg style="left:1431px;top:767px" width="6" height="4" viewBox="0 0 6 4"><path d="M0.2 0.4 L2.8 3.4 L5.4 0.4 Z" fill="#606060"/></svg>
<div style="left:1427.5px;top:775.8px;width:12.5px;height:3.4px;background:#dcdcdc;border-top:1px solid #f8f8f8;border-bottom:1px solid #9a9a9a;box-sizing:border-box;"></div>
<div style="left:19px;top:779.2px;width:1421px;height:31px;background:#f1f1f1;"></div>
<div style="left:19px;top:779.2px;width:1165px;height:1px;background:#e2e2e2;"></div>
<div style="left:20.3px;top:780.8px;width:11px;height:11px;background:#fff;border:1px solid #c6c6c6;box-sizing:border-box;"></div>
<svg style="left:23.2px;top:782.4px" width="5" height="8" viewBox="0 0 5 8"><path d="M4.4 0.4 L0.6 3.9 L4.4 7.4 Z" fill="#606060"/></svg>
<div style="left:31.3px;top:780.8px;width:760.2px;height:11px;background:#fff;border:1px solid #c6c6c6;box-sizing:border-box;"></div>
<div style="left:1170px;top:780.8px;width:11px;height:11px;background:#fff;border:1px solid #c6c6c6;box-sizing:border-box;"></div>
<svg style="left:1172.9px;top:782.4px" width="5" height="8" viewBox="0 0 5 8"><path d="M0.6 0.4 L4.4 3.9 L0.6 7.4 Z" fill="#606060"/></svg>
<div style="left:1188px;top:779px;width:239.2px;height:2px;background:#fff;"></div>
<div style="left:1283px;top:779px;width:1px;height:2px;background:#8fbf8f;"></div>
<div style="left:1189.4px;top:781px;width:11px;height:11px;background:#fff;border:1px solid #c6c6c6;box-sizing:border-box;"></div>
<svg style="left:1192.3px;top:782.6px" width="5" height="8" viewBox="0 0 5 8"><path d="M4.4 0.4 L0.6 3.9 L4.4 7.4 Z" fill="#606060"/></svg>
<div style="left:1200.4px;top:781px;width:69.2px;height:11px;background:#fff;border:1px solid #c6c6c6;box-sizing:border-box;"></div>
<div style="left:1415.2px;top:781px;width:11.4px;height:11px;background:#fff;border:1px solid #c6c6c6;box-sizing:border-box;"></div>
<svg style="left:1418.3px;top:782.6px" width="5" height="8" viewBox="0 0 5 8"><path d="M0.6 0.4 L4.4 3.9 L0.6 7.4 Z" fill="#606060"/></svg>
<div style="left:0px;top:792.8px;width:1440px;height:17.2px;background:#f1f1f1;"></div>
<span class="t" style="left:6.2px;top:792px;font-size:9px;color:#5a5a5a;letter-spacing:-0.409px;">Busy</span>
<svg style="left:48px;top:794px" width="13" height="12" viewBox="0 0 13 12"><rect x="0.6" y="1.6" width="7.6" height="3.4" fill="#555"/>
<path d="M1.6 2.6 H3.2 M4.2 2.6 H5.8" stroke="#fff" stroke-width="0.7"/><path d="M3.4 6.6 H9 V4.6 L12.2 7.6 L9 10.6 V8.6 H3.4 Z" fill="#444"/></svg>
<span class="t" style="left:62.4px;top:792px;font-size:9px;color:#5a5a5a;letter-spacing:-0.217px;">New Tasks : Auto Scheduled</span>
<div style="left:1201px;top:793.4px;width:27.6px;height:16.6px;background:#c8c8c8;"></div>
<svg style="left:1199.8px;top:793.4px" width="241" height="17" viewBox="0 0 241 17">
<g fill="none" stroke="#5e5e5e" stroke-width="1.1">
<rect x="10.2" y="4" width="9.6" height="8.6"/><path d="M11.6 6.2 H14.6 M13.4 8 H16.4 M15.2 9.8 H18.2"/>
<rect x="38.6" y="3.8" width="10" height="9"/><path d="M38.6 6.8 H48.6 M41.8 6.8 V12.8 M45.2 6.8 V12.8 M41.8 9.8 H48.6"/>
<rect x="67.6" y="3.8" width="10" height="9"/><path d="M67.6 8.2 H77.6 M72.4 3.8 V8.2 M71 8.2 V12.8"/>
<rect x="96" y="3.8" width="9.4" height="9"/><path d="M99.2 3.8 V12.8 M102.3 3.8 V12.8 M96 6.8 H105.4 M96 9.8 H105.4"/>
<path d="M127.4 4 H133.6 V12.8 H127.4 M125 6 H129.4 M125 10.6 H129.4 M127.2 4 V12.8"/>
</g>
<rect x="67.6" y="3.8" width="10" height="2.4" fill="#5e5e5e"/><rect x="38.6" y="3.8" width="10" height="2.4" fill="#5e5e5e"/>
<path d="M148.2 8.3 H152.4" stroke="#555" stroke-width="1.6"/><path d="M156 8.3 H228" stroke="#b5b5b5" stroke-width="1"/>
<path d="M193.4 5.6 V11" stroke="#8a8a8a" stroke-width="1"/><rect x="200.4" y="4" width="3.4" height="9" fill="#6a6a6a"/>
<path d="M232.4 8.3 H237.4 M234.9 5.8 V10.8" stroke="#555" stroke-width="1.4"/></svg>
<div style="left:538px;top:346px;width:464px;height:289px;background:#f0f0f0;border:1px solid #8e8e8e;border-right-color:#9a9a9a;border-bottom-color:#9a9a9a;box-sizing:border-box;box-shadow:0 1px 9px 0 rgba(0,0,0,0.2);">
<div style="left:0px;top:0px;width:462px;height:22.2px;background:#fff;"></div>
<div style="left:461px;top:37.6px;width:1px;height:249.4px;background:#6e6e6e;"></div>
<div style="left:0px;top:286px;width:462px;height:1px;background:#6e6e6e;"></div>
<span class="t" style="left:5.4px;top:3px;font-size:9.3px;color:#111;letter-spacing:-0.033px;">Task Information</span>
<svg style="left:446px;top:5px" width="10" height="10" viewBox="0 0 10 10"><path d="M0.8 0.8 L9.2 9.2 M9.2 0.8 L0.8 9.2" stroke="#333" stroke-width="0.95" fill="none"/></svg>
<span class="t" style="left:7px;top:23px;font-size:8.7px;color:#111;letter-spacing:-0.161px;">General</span>
<span class="t" style="left:45.6px;top:23px;font-size:8.7px;color:#111;letter-spacing:-0.343px;">Predecessors</span>
<span class="t" style="left:104px;top:23px;font-size:8.7px;color:#111;letter-spacing:-0.272px;">Resources</span>
<span class="t" style="left:152px;top:23px;font-size:8.7px;color:#111;letter-spacing:-0.098px;">Advanced</span>
<span class="t" style="left:234.6px;top:23px;font-size:8.7px;color:#111;letter-spacing:-0.115px;">Custom Fields</span>
<div style="left:39px;top:24px;width:1px;height:13.4px;background:#6a6a6a;"></div>
<div style="left:97.5px;top:24px;width:1px;height:13.4px;background:#6a6a6a;"></div>
<div style="left:144.9px;top:24px;width:1px;height:13.4px;background:#6a6a6a;"></div>
<div style="left:290.7px;top:24px;width:1px;height:13.4px;background:#6a6a6a;"></div>
<div style="left:192.2px;top:22.4px;width:38px;height:16px;background:#f0f0f0;border-left:1px solid #fff;border-right:1.5px solid #6d6d6d;box-sizing:border-box;"></div>
<span class="t" style="left:200.6px;top:22px;font-size:8.7px;color:#111;letter-spacing:0.063px;">Notes</span>
<div style="left:2px;top:37.6px;width:190px;height:1px;background:#fafafa;"></div>
<div style="left:230px;top:37.6px;width:62px;height:1px;background:#fafafa;"></div>
<span class="t" style="left:8.4px;top:47px;font-size:8.7px;color:#111;letter-spacing:-0.309px;">Name:</span>
<div style="left:8.4px;top:59.3px;width:5.6px;height:0.8px;background:#111;"></div>
<div style="left:38.4px;top:47.4px;width:261px;height:15px;background:#fff;border:1px solid #b4b4b4;box-sizing:border-box;"></div>
<span class="t" style="left:42.6px;top:47px;font-size:9.1px;color:#111;letter-spacing:-0.219px;">Prepare the outline business case</span>
<span class="t" style="left:306.6px;top:47px;font-size:8.7px;color:#111;letter-spacing:0.211px;">Duration:</span>
<div style="left:306.6px;top:59.3px;width:6.2px;height:0.8px;background:#111;"></div>
<div style="left:349.4px;top:47.4px;width:37.6px;height:15px;background:#fff;border:1px solid #b4b4b4;box-sizing:border-box;"></div>
<span class="t" style="left:354px;top:47px;font-size:8.7px;color:#111;letter-spacing:-0.227px;">1 day?</span>
<div style="left:387px;top:47.4px;width:11.6px;height:15px;background:#fff;border:1px solid #b4b4b4;box-sizing:border-box;"></div>
<div style="left:387px;top:54.6px;width:11.6px;height:1px;background:#b4b4b4;"></div>
<svg style="left:389.6px;top:49.6px" width="7" height="11" viewBox="0 0 7 11"><path d="M0.8 3.6 L3.3 0.9 L5.8 3.6 Z M0.8 7.2 L3.3 9.9 L5.8 7.2 Z" fill="#333"/></svg>
<div style="left:405.4px;top:50.4px;width:9.4px;height:9.4px;background:#fff;border:1px solid #333;box-sizing:border-box;"></div>
<svg style="left:406.4px;top:51.4px" width="8" height="8" viewBox="0 0 8 8"><path d="M1 4 L3 6.2 L7 1.2" stroke="#222" stroke-width="1" fill="none"/></svg>
<span class="t" style="left:417.8px;top:47px;font-size:8.7px;color:#111;letter-spacing:-0.01px;">Estimated</span>
<div style="left:417.8px;top:59.3px;width:5px;height:0.8px;background:#111;"></div>
<span class="t" style="left:8.4px;top:62px;font-size:8.7px;color:#111;letter-spacing:-0.15px;">Notes:</span>
<div style="left:17.6px;top:74.3px;width:3.2px;height:0.8px;background:#111;"></div>
<div style="left:7.8px;top:77.2px;width:449.4px;height:21.8px;background:#f0f0f0;border:1px solid #a6a6a6;box-sizing:border-box;"></div>
<div style="left:11.4px;top:79.9px;width:18.2px;height:17.4px;background:#e6e6e6;border:1px solid #c4c4c4;box-sizing:border-box;"></div>
<div style="left:14.3px;top:82.1px;width:12.5px;height:11.9px;background:#05050c;"></div>
<span class="t" style="left:16.1px;top:79.6px;font-family:'Liberation Serif',serif;font-size:12.6px;color:#3f7be0;">A</span>
<div style="left:35.4px;top:79.9px;width:18.2px;height:17.7px;background:#cde4f6;border:1px solid #3b8fd6;box-sizing:border-box;"></div>
<div style="left:56.2px;top:79.9px;width:17.6px;height:17.4px;background:#e8e8e8;border:1px solid #cdcdcd;box-sizing:border-box;"></div>
<div style="left:76.3px;top:79.9px;width:17.6px;height:17.4px;background:#e8e8e8;border:1px solid #cdcdcd;box-sizing:border-box;"></div>
<div style="left:100.2px;top:79.9px;width:17.6px;height:17.4px;background:#e8e8e8;border:1px solid #cdcdcd;box-sizing:border-box;"></div>
<div style="left:124.3px;top:79.9px;width:17.6px;height:17.4px;background:#e8e8e8;border:1px solid #cdcdcd;box-sizing:border-box;"></div>
<div style="left:39.2px;top:83.7px;width:10.6px;height:0.9px;background:#9bb4cd;"></div>
<div style="left:39.2px;top:86.2px;width:7px;height:0.9px;background:#9bb4cd;"></div>
<div style="left:39.2px;top:88.7px;width:10.6px;height:0.9px;background:#9bb4cd;"></div>
<div style="left:39.2px;top:91.2px;width:7px;height:0.9px;background:#9bb4cd;"></div>
<div style="left:59.6px;top:83.7px;width:10.6px;height:0.9px;background:#b4b4b4;"></div>
<div style="left:61.4px;top:86.2px;width:7px;height:0.9px;background:#b4b4b4;"></div>
<div style="left:59.6px;top:88.7px;width:10.6px;height:0.9px;background:#b4b4b4;"></div>
<div style="left:61.4px;top:91.2px;width:7px;height:0.9px;background:#b4b4b4;"></div>
<div style="left:79.5px;top:83.7px;width:10.6px;height:0.9px;background:#b4b4b4;"></div>
<div style="left:83.1px;top:86.2px;width:7px;height:0.9px;background:#b4b4b4;"></div>
<div style="left:79.5px;top:88.7px;width:10.6px;height:0.9px;background:#b4b4b4;"></div>
<div style="left:83.1px;top:91.2px;width:7px;height:0.9px;background:#b4b4b4;"></div>
<div style="left:104.1px;top:82.3px;width:2px;height:2px;background:#3a74d6;"></div>
<div style="left:108.2px;top:82.8px;width:5.2px;height:0.9px;background:#cacaca;"></div>
<div style="left:104.1px;top:86.7px;width:2px;height:2px;background:#3a74d6;"></div>
<div style="left:108.2px;top:87.2px;width:5.2px;height:0.9px;background:#cacaca;"></div>
<div style="left:104.1px;top:91.1px;width:2px;height:2px;background:#3a74d6;"></div>
<div style="left:108.2px;top:91.6px;width:5.2px;height:0.9px;background:#cacaca;"></div>
<div style="left:127.1px;top:82.8px;width:12px;height:10.5px;background:#fff;border:1px solid #3a74d6;border-top:2.6px solid #3a74d6;box-sizing:border-box;"></div>
<div style="left:7.7px;top:101.8px;width:450.4px;height:151.8px;background:#fff;border:1px solid #a0a0a0;box-sizing:border-box;"></div>
<span class="t" style="left:10.2px;top:104px;font-size:9.3px;color:#111;font-weight:bold;letter-spacing:0.129px;">Prepare the Outline Business Case</span>
<span class="t" style="left:10.2px;top:129px;font-size:9.1px;color:#111;letter-spacing:0.161px;">Prepare the PRINCE2 outline Business Case</span>
<div style="left:10px;top:156.6px;width:0.8px;height:11.4px;background:#111;"></div>
<span class="t" style="left:10.6px;top:155px;font-size:9.3px;color:#111;letter-spacing:0.146px;">Outline Business Case – its creation and use.</span>
<span class="t" style="left:10.2px;top:179.5px;font-size:9.5px;color:#111;letter-spacing:0.166px;">The Business Case states why the work of a project is worth doing and is therefore vital in ensuring</span>
<span class="t" style="left:10.2px;top:192.5px;font-size:9.5px;color:#111;letter-spacing:0.214px;">that the project cost time and risk is justified.</span>
<span class="t" style="left:10.2px;top:218.5px;font-size:9.5px;color:#111;letter-spacing:0.118px;">At this early point the outline Business Case will only contain a high-level view, however this is</span>
<span class="t" style="left:10.2px;top:230.5px;font-size:9.5px;color:#111;letter-spacing:0.164px;">sufficient to authorise the initiation stage, where the detailed business case will be created.</span>
<div style="left:444.4px;top:102.8px;width:12.6px;height:149.8px;background:#f0f0f0;"></div>
<div style="left:445px;top:117px;width:11.2px;height:24.4px;background:#c2c2c2;"></div>
<svg style="left:446.6px;top:107px" width="8" height="6" viewBox="0 0 8 6"><path d="M0.8 4.8 L4 1.4 L7.2 4.8" stroke="#555" stroke-width="1.2" fill="none"/></svg>
<svg style="left:446.6px;top:242.4px" width="8" height="6" viewBox="0 0 8 6"><path d="M0.8 1.2 L4 4.6 L7.2 1.2" stroke="#555" stroke-width="1.2" fill="none"/></svg>
<div style="left:8.4px;top:266.4px;width:54.4px;height:15px;background:#e1e1e1;border:1px solid #adadad;box-sizing:border-box;"></div>
<span class="t" style="left:26.4px;top:266px;font-size:8.7px;color:#111;letter-spacing:0.494px;">Help</span>
<div style="left:26.4px;top:278.7px;width:6.4px;height:0.8px;background:#111;"></div>
<div style="left:339.4px;top:266.4px;width:54.4px;height:15px;background:#e1e1e1;border:1px solid #0078d7;box-sizing:border-box;box-shadow:inset 0 0 0 0.6px #0078d7;"></div>
<span class="t" style="left:360.4px;top:266px;font-size:8.7px;color:#111;letter-spacing:0.5px;">OK</span>
<div style="left:402px;top:266.4px;width:54.8px;height:15px;background:#e1e1e1;border:1px solid #adadad;box-sizing:border-box;"></div>
<span class="t" style="left:416.6px;top:266px;font-size:8.7px;color:#111;letter-spacing:-0.098px;">Cancel</span>
</div>
</body></html>
